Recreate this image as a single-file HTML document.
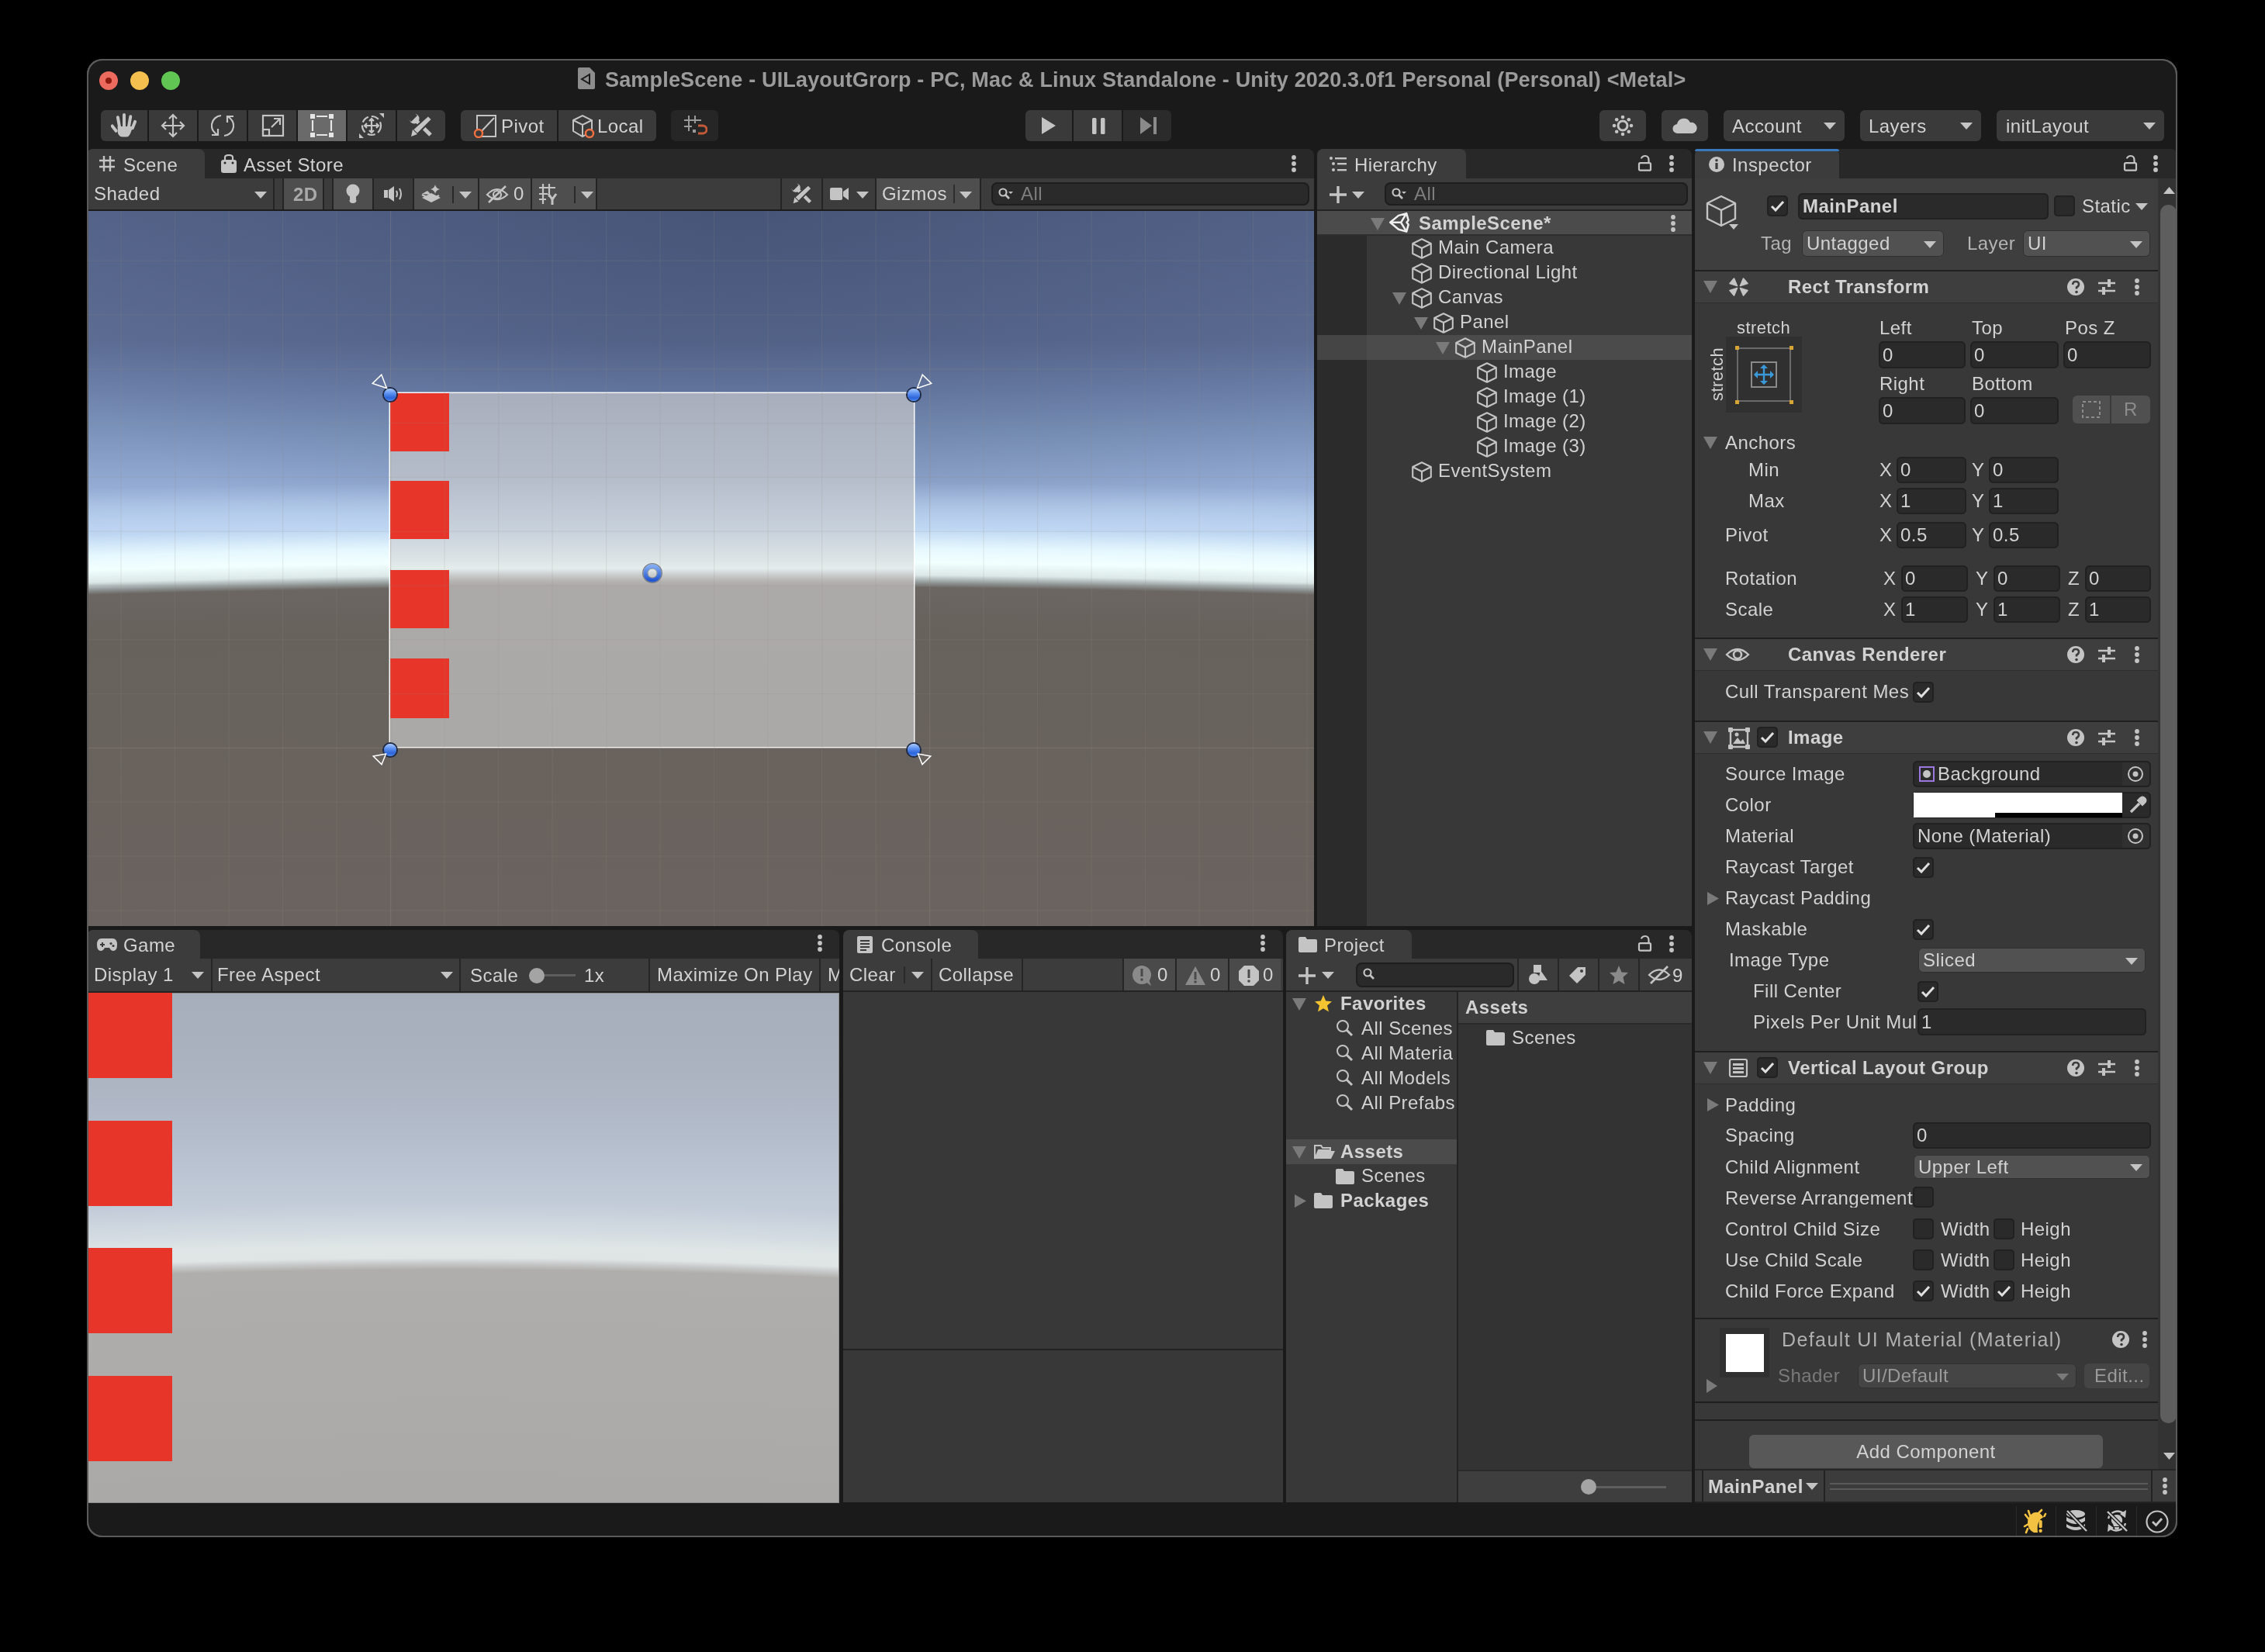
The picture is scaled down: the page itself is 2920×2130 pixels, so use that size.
<!DOCTYPE html><html><head><meta charset="utf-8"><style>
html,body{margin:0;padding:0;}
body{width:2920px;height:2130px;background:#000;position:relative;overflow:hidden;font-family:"Liberation Sans",sans-serif;}
#root{position:absolute;left:0;top:0;width:2920px;height:2130px;overflow:hidden;will-change:transform;}
#root>div,#root>svg{position:absolute;}
.t{white-space:nowrap;letter-spacing:0.45px;}
</style></head><body><div id="root">
<div style="left:112px;top:76px;width:2695px;height:1906px;background:#1a1a1a;border-radius:20px;box-shadow:inset 0 0 0 2px #5a5a5a;"></div>
<div style="left:128px;top:92px;width:24px;height:24px;background:#ec6a5e;border-radius:50%;"></div>
<div style="left:168px;top:92px;width:24px;height:24px;background:#f4bf4f;border-radius:50%;"></div>
<div style="left:208px;top:92px;width:24px;height:24px;background:#61c554;border-radius:50%;"></div>
<div style="left:136px;top:100px;width:8px;height:8px;background:#8e1b10;border-radius:50%;"></div>
<svg style="left:745px;top:87px;" width="22" height="28" viewBox="0 0 22 28"><path d="M0 2Q0 0 2 0H15L22 7V26Q22 28 20 28H2Q0 28 0 26Z" fill="#8d8d8d"/><path d="M5 15L15 9V21Z" fill="none" stroke="#1a1a1a" stroke-width="2"/></svg>
<div style="left:780px;top:89.8px;font-size:27px;line-height:27px;color:#9b9b9b;font-weight:bold;letter-spacing:0.17px;" class="t">SampleScene - UILayoutGrorp - PC, Mac &amp; Linux Standalone - Unity 2020.3.0f1 Personal (Personal) &lt;Metal&gt;</div>
<div style="left:130px;top:142px;width:60px;height:40px;background:#3a3a3a;border-radius:6px 0px 0px 6px;"></div>
<div style="left:192px;top:142px;width:62px;height:40px;background:#3a3a3a;border-radius:0px 0px 0px 0px;"></div>
<div style="left:256px;top:142px;width:62px;height:40px;background:#3a3a3a;border-radius:0px 0px 0px 0px;"></div>
<div style="left:320px;top:142px;width:62px;height:40px;background:#3a3a3a;border-radius:0px 0px 0px 0px;"></div>
<div style="left:384px;top:142px;width:62px;height:40px;background:#6a6a6a;border-radius:0px 0px 0px 0px;"></div>
<div style="left:448px;top:142px;width:62px;height:40px;background:#3a3a3a;border-radius:0px 0px 0px 0px;"></div>
<div style="left:512px;top:142px;width:62px;height:40px;background:#3a3a3a;border-radius:0px 6px 6px 0px;"></div>
<div style="left:594px;top:142px;width:124px;height:40px;background:#3a3a3a;border-radius:6px 0px 0px 6px;"></div>
<div style="left:720px;top:142px;width:126px;height:40px;background:#3a3a3a;border-radius:0px 6px 6px 0px;"></div>
<div style="left:865px;top:142px;width:61px;height:40px;background:#262626;border-radius:6px 6px 6px 6px;"></div>
<div style="left:1322px;top:142px;width:60px;height:40px;background:#3a3a3a;border-radius:6px 0px 0px 6px;"></div>
<div style="left:1384px;top:142px;width:62px;height:40px;background:#3a3a3a;border-radius:0px 0px 0px 0px;"></div>
<div style="left:1448px;top:142px;width:62px;height:40px;background:#2b2b2b;border-radius:0px 6px 6px 0px;"></div>
<div style="left:2062px;top:142px;width:60px;height:40px;background:#3a3a3a;border-radius:6px 6px 6px 6px;"></div>
<div style="left:2142px;top:142px;width:60px;height:40px;background:#3a3a3a;border-radius:6px 6px 6px 6px;"></div>
<div style="left:2222px;top:142px;width:156px;height:40px;background:#3a3a3a;border-radius:6px 6px 6px 6px;"></div>
<div style="left:2398px;top:142px;width:156px;height:40px;background:#3a3a3a;border-radius:6px 6px 6px 6px;"></div>
<div style="left:2574px;top:142px;width:216px;height:40px;background:#3a3a3a;border-radius:6px 6px 6px 6px;"></div>
<svg style="left:143px;top:146px;" width="34" height="31" viewBox="0 0 34 31"><g transform="translate(3 0)" fill="#c4c4c4"><rect x="6.5" y="3" width="4" height="17" rx="2" transform="rotate(-10 8.5 20)"/><rect x="12" y="0" width="4" height="19" rx="2"/><rect x="17.5" y="2" width="4" height="18" rx="2" transform="rotate(10 19.5 20)"/><rect x="22" y="8" width="4" height="13" rx="2" transform="rotate(22 24 21)"/><rect x="1" y="13" width="4" height="12" rx="2" transform="rotate(-38 3 22)"/><path d="M5.5 17H25.5L22.5 25Q20.5 30.5 17 30.5H12Q8 30.5 6 26Z"/></g></svg>
<svg style="left:207px;top:146px;" width="32" height="32" viewBox="0 0 32 32"><g stroke="#c4c4c4" stroke-width="2.2" fill="none"><path d="M16 2V30M2 16H30M11 7L16 2L21 7M11 25L16 30L21 25M7 11L2 16L7 21M25 11L30 16L25 21"/></g></svg>
<svg style="left:272px;top:147px;" width="30" height="30" viewBox="0 0 30 30"><g stroke="#c4c4c4" stroke-width="2.2" fill="none"><path d="M13 2A13 13 0 0 0 9 27M17 28A13 13 0 0 0 21 3"/><path d="M9 19V27H1M21 11V3H29"/></g></svg>
<svg style="left:337px;top:147px;" width="30" height="30" viewBox="0 0 30 30"><g stroke="#c4c4c4" stroke-width="2.2" fill="none"><rect x="2" y="2" width="26" height="26"/><rect x="2" y="20" width="8" height="8"/><path d="M13 17L24 6M16 6H24V14"/></g></svg>
<svg style="left:400px;top:147px;" width="30" height="30" viewBox="0 0 30 30"><g fill="#e6e6e6"><rect x="0" y="0" width="6" height="6"/><rect x="24" y="0" width="6" height="6"/><rect x="0" y="24" width="6" height="6"/><rect x="24" y="24" width="6" height="6"/></g><path d="M8 3H22M8 27H22M3 8V22M27 8V22" stroke="#e6e6e6" stroke-width="2.2"/></svg>
<svg style="left:463px;top:146px;" width="32" height="32" viewBox="0 0 32 32"><g stroke="#c4c4c4" stroke-width="2.2" fill="none"><circle cx="16" cy="16" r="12" stroke-dasharray="10 4"/><path d="M16 7V25M7 16H25M13 10L16 7L19 10M13 22L16 25L19 22M10 13L7 16L10 19M22 13L25 16L22 19"/></g><path d="M0 32L0 26L6 32Z M32 0L32 6L26 0Z" fill="#c4c4c4"/></svg>
<svg style="left:527px;top:146px;" width="32" height="32" viewBox="0 0 32 32"><path d="M9 9L28 28" stroke="#c4c4c4" stroke-width="5"/><circle cx="7" cy="7" r="6.5" fill="#c4c4c4"/><path d="M0 0L7 7L3 11L-3 5Z M0 0L7 7L11 3L5 -3Z" fill="#3a3a3a"/><path d="M25 3L30 8L11 27L5 21Z" fill="#c4c4c4" stroke="#3a3a3a" stroke-width="2"/><path d="M5 21L11 27L3 30Z" fill="#c4c4c4"/></svg>
<svg style="left:610px;top:148px;" width="30" height="30" viewBox="0 0 30 30"><rect x="5" y="1" width="24" height="27" fill="none" stroke="#c4c4c4" stroke-width="2"/><path d="M10 22L27 4" stroke="#c4c4c4" stroke-width="2"/><circle cx="7" cy="24" r="5" fill="#3a3a3a" stroke="#f07040" stroke-width="2.4"/></svg>
<div style="left:646px;top:151.3px;font-size:24px;line-height:24px;color:#d2d2d2;" class="t">Pivot</div>
<svg style="left:736px;top:147px;" width="32" height="32" viewBox="0 0 32 32"><path d="M3 8L15 2L27 8V22L15 29L3 22Z M3 8L15 14L27 8M15 14V29" fill="none" stroke="#c4c4c4" stroke-width="2"/><circle cx="24" cy="25" r="5" fill="#3a3a3a" stroke="#f07040" stroke-width="2.4"/></svg>
<div style="left:770px;top:151.3px;font-size:24px;line-height:24px;color:#d2d2d2;" class="t">Local</div>
<svg style="left:880px;top:147px;" width="32" height="32" viewBox="0 0 32 32"><g stroke="#9a9a9a" stroke-width="2"><path d="M8 2V22M16 2V12M2 8H24M2 16H12"/></g><rect x="13" y="20" width="4" height="4" fill="#9a9a9a"/><path d="M20 15H26A5 5 0 0 1 26 25H20" fill="none" stroke="#c25a3a" stroke-width="3"/></svg>
<svg style="left:1343px;top:151px;" width="18" height="22" viewBox="0 0 18 22"><path d="M0 0V22L18 11Z" fill="#c4c4c4"/></svg>
<svg style="left:1408px;top:152px;" width="17" height="21" viewBox="0 0 17 21"><rect x="0" y="0" width="5.5" height="21" rx="1.5" fill="#c4c4c4"/><rect x="11" y="0" width="5.5" height="21" rx="1.5" fill="#c4c4c4"/></svg>
<svg style="left:1470px;top:151px;" width="22" height="22" viewBox="0 0 22 22"><path d="M0 0V22L15 11Z" fill="#8a8a8a"/><rect x="17" y="0" width="4" height="22" fill="#8a8a8a"/></svg>
<svg style="left:2076px;top:146px;" width="32" height="32" viewBox="0 0 32 32"><circle cx="16" cy="16" r="6" fill="none" stroke="#c4c4c4" stroke-width="3"/><circle cx="27.0" cy="16.0" r="2.3" fill="#c4c4c4"/><circle cx="23.8" cy="23.8" r="2.3" fill="#c4c4c4"/><circle cx="16.0" cy="27.0" r="2.3" fill="#c4c4c4"/><circle cx="8.2" cy="23.8" r="2.3" fill="#c4c4c4"/><circle cx="5.0" cy="16.0" r="2.3" fill="#c4c4c4"/><circle cx="8.2" cy="8.2" r="2.3" fill="#c4c4c4"/><circle cx="16.0" cy="5.0" r="2.3" fill="#c4c4c4"/><circle cx="23.8" cy="8.2" r="2.3" fill="#c4c4c4"/></svg>
<svg style="left:2156px;top:151px;" width="32" height="22" viewBox="0 0 32 22"><path d="M7 21A6 6 0 0 1 6 9A9 9 0 0 1 23 7A7 7 0 0 1 26 21Z" fill="#c4c4c4"/></svg>
<div style="left:2233px;top:151.3px;font-size:24px;line-height:24px;color:#d2d2d2;" class="t">Account</div>
<svg style="left:2351.0px;top:157.5px;" width="16" height="9" viewBox="0 0 16 9"><path d="M0 0H16L8.0 9Z" fill="#c4c4c4"/></svg>
<div style="left:2409px;top:151.3px;font-size:24px;line-height:24px;color:#d2d2d2;" class="t">Layers</div>
<svg style="left:2527.0px;top:157.5px;" width="16" height="9" viewBox="0 0 16 9"><path d="M0 0H16L8.0 9Z" fill="#c4c4c4"/></svg>
<div style="left:2586px;top:151.3px;font-size:24px;line-height:24px;color:#d2d2d2;" class="t">initLayout</div>
<svg style="left:2763.0px;top:157.5px;" width="16" height="9" viewBox="0 0 16 9"><path d="M0 0H16L8.0 9Z" fill="#c4c4c4"/></svg>
<div style="left:112px;top:192px;width:1582px;height:38px;background:#282828;border-radius:8px 8px 0 0;"></div>
<div style="left:112px;top:192px;width:152px;height:38px;background:#3c3c3c;border-radius:8px 8px 0 0;"></div>
<svg style="left:127px;top:200px;" width="22" height="22" viewBox="0 0 22 22"><g stroke="#c4c4c4" stroke-width="2.4"><path d="M7 1V21M15 1V21M1 7H21M1 15H21"/></g></svg>
<div style="left:159px;top:201.3px;font-size:24px;line-height:24px;color:#d2d2d2;" class="t">Scene</div>
<svg style="left:284px;top:199px;" width="22" height="24" viewBox="0 0 22 24"><path d="M6 8V4Q6 1 11 1Q16 1 16 4V8" fill="none" stroke="#c4c4c4" stroke-width="2.2"/><rect x="1" y="7" width="20" height="17" rx="3" fill="#c4c4c4"/><circle cx="6" cy="11" r="1.5" fill="#282828"/><circle cx="16" cy="11" r="1.5" fill="#282828"/></svg>
<div style="left:314px;top:201.3px;font-size:24px;line-height:24px;color:#d2d2d2;" class="t">Asset Store</div>
<svg style="left:1663px;top:198px;" width="10" height="26" viewBox="0 0 10 26"><circle cx="5" cy="5" r="2.9" fill="#c4c4c4"/><circle cx="5" cy="13" r="2.9" fill="#c4c4c4"/><circle cx="5" cy="21" r="2.9" fill="#c4c4c4"/></svg>
<div style="left:112px;top:230px;width:1582px;height:40px;background:#3c3c3c;"></div>
<div style="left:112px;top:270px;width:1582px;height:2px;background:#1c1c1c;"></div>
<div style="left:121px;top:238.3px;font-size:24px;line-height:24px;color:#d2d2d2;" class="t">Shaded</div>
<svg style="left:328.0px;top:246.5px;" width="16" height="9" viewBox="0 0 16 9"><path d="M0 0H16L8.0 9Z" fill="#c4c4c4"/></svg>
<div style="left:352px;top:230px;width:2px;height:40px;background:#242424;"></div>
<div style="left:364px;top:230px;width:2px;height:40px;background:#242424;"></div>
<div style="left:416px;top:230px;width:2px;height:40px;background:#242424;"></div>
<div style="left:428px;top:230px;width:2px;height:40px;background:#242424;"></div>
<div style="left:480px;top:230px;width:2px;height:40px;background:#242424;"></div>
<div style="left:532px;top:230px;width:2px;height:40px;background:#242424;"></div>
<div style="left:616px;top:230px;width:2px;height:40px;background:#242424;"></div>
<div style="left:684px;top:230px;width:2px;height:40px;background:#242424;"></div>
<div style="left:768px;top:230px;width:2px;height:40px;background:#242424;"></div>
<div style="left:366px;top:230px;width:50px;height:40px;background:#4e4e4e;"></div>
<div style="left:430px;top:230px;width:50px;height:40px;background:#4e4e4e;"></div>
<div style="left:482px;top:230px;width:50px;height:40px;background:#3a3a3a;"></div>
<div style="left:534px;top:230px;width:82px;height:40px;background:#4e4e4e;"></div>
<div style="left:618px;top:230px;width:66px;height:40px;background:#4e4e4e;"></div>
<div style="left:686px;top:230px;width:82px;height:40px;background:#4e4e4e;"></div>
<div style="left:378px;top:239.3px;font-size:24px;line-height:24px;color:#a9a9a9;font-weight:bold;" class="t">2D</div>
<svg style="left:445px;top:237px;" width="20" height="26" viewBox="0 0 20 26"><circle cx="10" cy="9" r="8.5" fill="#c4c4c4"/><rect x="6" y="15" width="8" height="6" fill="#c4c4c4"/><path d="M5.5 21H14.5Q14.5 25 10 25Q5.5 25 5.5 21Z" fill="#c4c4c4"/></svg>
<svg style="left:494px;top:239px;" width="26" height="22" viewBox="0 0 26 22"><rect x="1" y="6" width="5" height="10" fill="#c4c4c4"/><path d="M7 6L14 1V21L7 16Z" fill="#c4c4c4"/><path d="M17 7Q19 11 17 15M21 4Q25 11 21 18" fill="none" stroke="#c4c4c4" stroke-width="2"/></svg>
<svg style="left:543px;top:237px;" width="26" height="26" viewBox="0 0 26 26"><path d="M1 18L13 12L25 18L13 24Z" fill="#c4c4c4"/><path d="M1 13L8 9L13 14L1 13Z" fill="#c4c4c4"/><path d="M1 14L13 20L23 15" fill="none" stroke="#c4c4c4" stroke-width="2.4"/><path d="M18 1Q19 6 24 7Q19 8 18 13Q17 8 12 7Q17 6 18 1Z" fill="#c4c4c4"/></svg>
<div style="left:583px;top:240px;width:2px;height:22px;background:#2a2a2a;"></div>
<svg style="left:592.0px;top:246.5px;" width="16" height="9" viewBox="0 0 16 9"><path d="M0 0H16L8.0 9Z" fill="#c4c4c4"/></svg>
<svg style="left:626px;top:238px;" width="30" height="24" viewBox="0 0 30 24"><path d="M2 13Q15 -1 28 13Q15 25 2 13Z" fill="none" stroke="#c4c4c4" stroke-width="2.2"/><circle cx="15" cy="13" r="5" fill="none" stroke="#c4c4c4" stroke-width="2.2"/><path d="M4 23L26 2" stroke="#c4c4c4" stroke-width="2.6"/></svg>
<div style="left:662px;top:238.3px;font-size:24px;line-height:24px;color:#d2d2d2;" class="t">0</div>
<svg style="left:694px;top:236px;" width="30" height="28" viewBox="0 0 30 28"><g stroke="#c4c4c4" stroke-width="2.2"><path d="M6 1V27M14 1V18M1 6H22M1 14H12M1 21H10"/></g><path d="M13 14L18 21L23 14M18 21V28" fill="none" stroke="#c4c4c4" stroke-width="3"/></svg>
<div style="left:740px;top:240px;width:2px;height:22px;background:#2a2a2a;"></div>
<svg style="left:749.0px;top:246.5px;" width="16" height="9" viewBox="0 0 16 9"><path d="M0 0H16L8.0 9Z" fill="#c4c4c4"/></svg>
<div style="left:1006px;top:230px;width:2px;height:40px;background:#242424;"></div>
<div style="left:1059px;top:230px;width:2px;height:40px;background:#242424;"></div>
<div style="left:1128px;top:230px;width:2px;height:40px;background:#242424;"></div>
<div style="left:1263px;top:230px;width:2px;height:40px;background:#242424;"></div>
<div style="left:1130px;top:230px;width:133px;height:40px;background:#4e4e4e;"></div>
<svg style="left:1020px;top:236px;" width="28" height="28" viewBox="0 0 28 28"><g transform="scale(0.875)"><path d="M9 9L28 28" stroke="#c4c4c4" stroke-width="5"/><circle cx="7" cy="7" r="6.5" fill="#c4c4c4"/><path d="M0 0L7 7L3 11L-3 5Z M0 0L7 7L11 3L5 -3Z" fill="#3c3c3c"/><path d="M25 3L30 8L11 27L5 21Z" fill="#c4c4c4" stroke="#3c3c3c" stroke-width="2"/><path d="M5 21L11 27L3 30Z" fill="#c4c4c4"/></g></svg>
<svg style="left:1070px;top:240px;" width="26" height="20" viewBox="0 0 26 20"><rect x="0" y="2" width="16" height="16" rx="2" fill="#c4c4c4"/><path d="M17 7L24 2V18L17 13Z" fill="#c4c4c4"/></svg>
<svg style="left:1104.0px;top:246.5px;" width="16" height="9" viewBox="0 0 16 9"><path d="M0 0H16L8.0 9Z" fill="#c4c4c4"/></svg>
<div style="left:1137px;top:238.3px;font-size:24px;line-height:24px;color:#d2d2d2;" class="t">Gizmos</div>
<div style="left:1229px;top:238px;width:2px;height:24px;background:#2e2e2e;"></div>
<svg style="left:1237.0px;top:246.5px;" width="16" height="9" viewBox="0 0 16 9"><path d="M0 0H16L8.0 9Z" fill="#c4c4c4"/></svg>
<div style="left:1278px;top:235px;width:410px;height:30px;background:#2a2a2a;border-radius:8px;box-shadow:inset 0 0 0 2px #1e1e1e;"></div>
<svg style="left:1287px;top:242px;" width="20" height="18" viewBox="0 0 20 18"><circle cx="6" cy="6" r="4.5" fill="none" stroke="#c4c4c4" stroke-width="2.2"/><path d="M9 9L14 14" stroke="#c4c4c4" stroke-width="2.6"/><path d="M13 5H19L16 8Z" fill="#c4c4c4"/></svg>
<div style="left:1316px;top:238.3px;font-size:24px;line-height:24px;color:#7d7d7d;" class="t">All</div>
<div style="left:112px;top:272px;width:1582px;height:922px;background:radial-gradient(7531px 2000px at 788px 2478px,#6a635f 77.8%,#68625d 96.9%,#6b6662 99.7%,#8e9494 100%,#dce8e8 100.5%,#f2ffff 101.3%,#e6f8fe 102.2%,#bed6f2 103.55%,rgba(151,174,214,0) 106.5%),radial-gradient(ellipse 950px 520px at 838px 0px,rgba(35,45,75,0.28),rgba(35,45,75,0) 100%),linear-gradient(to bottom,#55648a 0px,#5d6d94 167px,#6c80aa 230px,#7a92ba 279px,#97aed6 363px,#a8c0e2 400px,#b5cef0 430px,#b5cef0 922px);overflow:hidden;"></div>
<div style="left:503px;top:507px;width:675px;height:456px;background:linear-gradient(to bottom,#a8aebc 0px,#b4bcca 107px,#c8d2dc 178px,#dde4e6 215px,#e4ecec 226px,#c8caca 235px,#b4b2b0 243px,#acaaa8 249px,#aaa9a7 456px);box-shadow:0 0 0 1.5px rgba(255,255,255,0.95);"></div>
<div style="left:503px;top:507px;width:76px;height:75px;background:#e8352a;"></div>
<div style="left:503px;top:620px;width:76px;height:75px;background:#e8352a;"></div>
<div style="left:503px;top:735px;width:76px;height:75px;background:#e8352a;"></div>
<div style="left:503px;top:849px;width:76px;height:77px;background:#e8352a;"></div>
<svg style="left:112px;top:272px;" width="1582" height="922" viewBox="0 0 1582 922"><rect x="43.5" y="0" width="1.2" height="922" fill="rgba(150,140,130,0.16)"/><rect x="113.0" y="0" width="1.2" height="922" fill="rgba(150,140,130,0.16)"/><rect x="182.5" y="0" width="1.2" height="922" fill="rgba(150,140,130,0.16)"/><rect x="252.0" y="0" width="1.2" height="922" fill="rgba(150,140,130,0.16)"/><rect x="321.5" y="0" width="1.2" height="922" fill="rgba(150,140,130,0.16)"/><rect x="391.0" y="0" width="1.2" height="922" fill="rgba(150,140,130,0.3)"/><rect x="460.5" y="0" width="1.2" height="922" fill="rgba(150,140,130,0.16)"/><rect x="530.0" y="0" width="1.2" height="922" fill="rgba(150,140,130,0.16)"/><rect x="599.5" y="0" width="1.2" height="922" fill="rgba(150,140,130,0.16)"/><rect x="669.0" y="0" width="1.2" height="922" fill="rgba(150,140,130,0.16)"/><rect x="738.5" y="0" width="1.2" height="922" fill="rgba(150,140,130,0.16)"/><rect x="808.0" y="0" width="1.2" height="922" fill="rgba(150,140,130,0.16)"/><rect x="877.5" y="0" width="1.2" height="922" fill="rgba(150,140,130,0.16)"/><rect x="947.0" y="0" width="1.2" height="922" fill="rgba(150,140,130,0.16)"/><rect x="1016.5" y="0" width="1.2" height="922" fill="rgba(150,140,130,0.16)"/><rect x="1086.0" y="0" width="1.2" height="922" fill="rgba(150,140,130,0.3)"/><rect x="1155.5" y="0" width="1.2" height="922" fill="rgba(150,140,130,0.16)"/><rect x="1225.0" y="0" width="1.2" height="922" fill="rgba(150,140,130,0.16)"/><rect x="1294.5" y="0" width="1.2" height="922" fill="rgba(150,140,130,0.16)"/><rect x="1364.0" y="0" width="1.2" height="922" fill="rgba(150,140,130,0.16)"/><rect x="1433.5" y="0" width="1.2" height="922" fill="rgba(150,140,130,0.16)"/><rect x="1503.0" y="0" width="1.2" height="922" fill="rgba(150,140,130,0.16)"/><rect x="1572.5" y="0" width="1.2" height="922" fill="rgba(150,140,130,0.16)"/><rect x="0" y="63.6" width="1582" height="1.2" fill="rgba(150,140,130,0.16)"/><rect x="0" y="133.4" width="1582" height="1.2" fill="rgba(150,140,130,0.16)"/><rect x="0" y="203.2" width="1582" height="1.2" fill="rgba(150,140,130,0.16)"/><rect x="0" y="273.0" width="1582" height="1.2" fill="rgba(150,140,130,0.16)"/><rect x="0" y="342.8" width="1582" height="1.2" fill="rgba(150,140,130,0.16)"/><rect x="0" y="412.6" width="1582" height="1.2" fill="rgba(150,140,130,0.16)"/><rect x="0" y="482.4" width="1582" height="1.2" fill="rgba(150,140,130,0.16)"/><rect x="0" y="552.2" width="1582" height="1.2" fill="rgba(150,140,130,0.16)"/><rect x="0" y="622.0" width="1582" height="1.2" fill="rgba(150,140,130,0.16)"/><rect x="0" y="691.8" width="1582" height="1.2" fill="rgba(150,140,130,0.3)"/><rect x="0" y="761.6" width="1582" height="1.2" fill="rgba(150,140,130,0.16)"/><rect x="0" y="831.4" width="1582" height="1.2" fill="rgba(150,140,130,0.16)"/><rect x="0" y="901.2" width="1582" height="1.2" fill="rgba(150,140,130,0.16)"/></svg>
<div style="left:495px;top:501px;width:16px;height:16px;background:linear-gradient(to bottom,#a8c8ff,#5a90f0 40%,#2d64d8 75%,#4a86f0);border-radius:50%;box-shadow:0 0 0 2px #1e2a44;"></div>
<div style="left:1170px;top:501px;width:16px;height:16px;background:linear-gradient(to bottom,#a8c8ff,#5a90f0 40%,#2d64d8 75%,#4a86f0);border-radius:50%;box-shadow:0 0 0 2px #1e2a44;"></div>
<div style="left:495px;top:959px;width:16px;height:16px;background:linear-gradient(to bottom,#a8c8ff,#5a90f0 40%,#2d64d8 75%,#4a86f0);border-radius:50%;box-shadow:0 0 0 2px #1e2a44;"></div>
<div style="left:1170px;top:959px;width:16px;height:16px;background:linear-gradient(to bottom,#a8c8ff,#5a90f0 40%,#2d64d8 75%,#4a86f0);border-radius:50%;box-shadow:0 0 0 2px #1e2a44;"></div>
<svg style="left:470px;top:470px;" width="741" height="540" viewBox="0 0 741 540"><path d="M10.3 24.4 L21.8 13.2 L28.5 30.5Z" fill="none" stroke="#fff" stroke-width="1.5"/><path d="M730.7 24.4 L719.2 13.2 L712.5 30.5Z" fill="none" stroke="#fff" stroke-width="1.5"/><path d="M11.2 505.0 L22.0 515.6 L27.5 502.0Z" fill="none" stroke="#fff" stroke-width="1.5"/><path d="M729.8 505.0 L719.0 515.6 L713.5 502.0Z" fill="none" stroke="#fff" stroke-width="1.5"/></svg>
<svg style="left:826px;top:725px;" width="30" height="30" viewBox="0 0 30 30"><defs><linearGradient id="pg" x1="0" y1="0" x2="0" y2="1"><stop offset="0" stop-color="#80aaf2"/><stop offset="1" stop-color="#2458d0"/></linearGradient></defs><circle cx="15" cy="14" r="9" fill="none" stroke="url(#pg)" stroke-width="5.5"/><circle cx="15" cy="14" r="12.3" fill="none" stroke="#7a7e86" stroke-width="1.3"/><circle cx="15" cy="14" r="6" fill="none" stroke="#8a9098" stroke-width="1"/></svg>
<div style="left:1698px;top:192px;width:483px;height:38px;background:#282828;border-radius:8px 8px 0 0;"></div>
<div style="left:1698px;top:192px;width:192px;height:38px;background:#3c3c3c;border-radius:8px 8px 0 0;"></div>
<svg style="left:1714px;top:202px;" width="22" height="20" viewBox="0 0 22 20"><g fill="#c4c4c4"><circle cx="2" cy="2" r="2"/><circle cx="5" cy="9" r="2"/><circle cx="5" cy="17" r="2"/><rect x="7" y="1" width="15" height="2.4"/><rect x="10" y="8" width="12" height="2.4"/><rect x="10" y="16" width="12" height="2.4"/></g></svg>
<div style="left:1746px;top:201.3px;font-size:24px;line-height:24px;color:#d2d2d2;" class="t">Hierarchy</div>
<svg style="left:2111px;top:199px;" width="20" height="22" viewBox="0 0 20 22"><path d="M14.5 11V7.5Q14.5 2 9.8 2Q6.8 2 5.2 4.5" fill="none" stroke="#c4c4c4" stroke-width="2.2" stroke-linecap="round"/><rect x="2" y="11.2" width="15" height="9.5" rx="1.5" fill="none" stroke="#c4c4c4" stroke-width="2.2"/></svg>
<svg style="left:2150px;top:198px;" width="10" height="26" viewBox="0 0 10 26"><circle cx="5" cy="5" r="2.9" fill="#c4c4c4"/><circle cx="5" cy="13" r="2.9" fill="#c4c4c4"/><circle cx="5" cy="21" r="2.9" fill="#c4c4c4"/></svg>
<div style="left:1698px;top:230px;width:483px;height:40px;background:#3c3c3c;"></div>
<div style="left:1698px;top:270px;width:483px;height:2px;background:#232323;"></div>
<svg style="left:1712px;top:238px;" width="26" height="26" viewBox="0 0 26 26"><path d="M13 2V24M2 13H24" stroke="#c4c4c4" stroke-width="3.4"/></svg>
<svg style="left:1743.0px;top:246.5px;" width="16" height="9" viewBox="0 0 16 9"><path d="M0 0H16L8.0 9Z" fill="#c4c4c4"/></svg>
<div style="left:1785px;top:235px;width:391px;height:30px;background:#2a2a2a;border-radius:8px;box-shadow:inset 0 0 0 2px #1e1e1e;"></div>
<svg style="left:1794px;top:242px;" width="20" height="18" viewBox="0 0 20 18"><circle cx="6" cy="6" r="4.5" fill="none" stroke="#c4c4c4" stroke-width="2.2"/><path d="M9 9L14 14" stroke="#c4c4c4" stroke-width="2.6"/><path d="M13 5H19L16 8Z" fill="#c4c4c4"/></svg>
<div style="left:1823px;top:238.3px;font-size:24px;line-height:24px;color:#7d7d7d;" class="t">All</div>
<div style="left:1698px;top:272px;width:483px;height:922px;background:#383838;"></div>
<div style="left:1698px;top:304px;width:64px;height:890px;background:#2b2b2b;"></div>
<div style="left:1698px;top:272px;width:483px;height:30px;background:#4b4b4b;"></div>
<div style="left:1698px;top:302px;width:483px;height:2px;background:#2e2e2e;"></div>
<div style="left:1698px;top:432px;width:483px;height:32px;background:#4b4b4b;"></div>
<div style="left:1698px;top:432px;width:64px;height:32px;background:#454545;"></div>
<svg style="left:1767.0px;top:281.0px;" width="18" height="16" viewBox="0 0 18 16"><path d="M0 0H18L9.0 16Z" fill="#7a7a7a"/></svg>
<svg style="left:1790px;top:273px;" width="28" height="28" viewBox="0 0 28 28"><path d="M2.2 13.8L13 4.9L23.2 2.1L25.7 11L23.5 13.8L25.7 16.6L23.2 25.6L13 22.7Z M2.2 13.8H16.1M16.1 13.8L23.2 2.1M16.1 13.8L23.2 25.6" fill="none" stroke="#eeeeee" stroke-width="2.5" stroke-linejoin="round"/></svg>
<div style="left:1829px;top:276.3px;font-size:24px;line-height:24px;color:#d2d2d2;font-weight:bold;" class="t">SampleScene*</div>
<svg style="left:2152px;top:275px;" width="10" height="26" viewBox="0 0 10 26"><circle cx="5" cy="5" r="2.9" fill="#c4c4c4"/><circle cx="5" cy="13" r="2.9" fill="#c4c4c4"/><circle cx="5" cy="21" r="2.9" fill="#c4c4c4"/></svg>
<svg style="left:1820px;top:307px;" width="26" height="27" viewBox="0 0 26 27"><path d="M13 1.2L24.8 7V20L13 25.8L1.2 20V7Z M1.2 7L13 13L24.8 7M13 13V25.8" fill="none" stroke="#c4c4c4" stroke-width="2.1" stroke-linejoin="round"/></svg>
<div style="left:1854px;top:306.8px;font-size:24px;line-height:24px;color:#d2d2d2;" class="t">Main Camera</div>
<svg style="left:1820px;top:339px;" width="26" height="27" viewBox="0 0 26 27"><path d="M13 1.2L24.8 7V20L13 25.8L1.2 20V7Z M1.2 7L13 13L24.8 7M13 13V25.8" fill="none" stroke="#c4c4c4" stroke-width="2.1" stroke-linejoin="round"/></svg>
<div style="left:1854px;top:338.8px;font-size:24px;line-height:24px;color:#d2d2d2;" class="t">Directional Light</div>
<svg style="left:1795.0px;top:377.0px;" width="18" height="16" viewBox="0 0 18 16"><path d="M0 0H18L9.0 16Z" fill="#7a7a7a"/></svg>
<svg style="left:1820px;top:371px;" width="26" height="27" viewBox="0 0 26 27"><path d="M13 1.2L24.8 7V20L13 25.8L1.2 20V7Z M1.2 7L13 13L24.8 7M13 13V25.8" fill="none" stroke="#c4c4c4" stroke-width="2.1" stroke-linejoin="round"/></svg>
<div style="left:1854px;top:370.8px;font-size:24px;line-height:24px;color:#d2d2d2;" class="t">Canvas</div>
<svg style="left:1823.0px;top:409.0px;" width="18" height="16" viewBox="0 0 18 16"><path d="M0 0H18L9.0 16Z" fill="#7a7a7a"/></svg>
<svg style="left:1848px;top:403px;" width="26" height="27" viewBox="0 0 26 27"><path d="M13 1.2L24.8 7V20L13 25.8L1.2 20V7Z M1.2 7L13 13L24.8 7M13 13V25.8" fill="none" stroke="#c4c4c4" stroke-width="2.1" stroke-linejoin="round"/></svg>
<div style="left:1882px;top:402.8px;font-size:24px;line-height:24px;color:#d2d2d2;" class="t">Panel</div>
<svg style="left:1851.0px;top:441.0px;" width="18" height="16" viewBox="0 0 18 16"><path d="M0 0H18L9.0 16Z" fill="#7a7a7a"/></svg>
<svg style="left:1876px;top:435px;" width="26" height="27" viewBox="0 0 26 27"><path d="M13 1.2L24.8 7V20L13 25.8L1.2 20V7Z M1.2 7L13 13L24.8 7M13 13V25.8" fill="none" stroke="#c4c4c4" stroke-width="2.1" stroke-linejoin="round"/></svg>
<div style="left:1910px;top:434.8px;font-size:24px;line-height:24px;color:#d2d2d2;" class="t">MainPanel</div>
<svg style="left:1904px;top:467px;" width="26" height="27" viewBox="0 0 26 27"><path d="M13 1.2L24.8 7V20L13 25.8L1.2 20V7Z M1.2 7L13 13L24.8 7M13 13V25.8" fill="none" stroke="#c4c4c4" stroke-width="2.1" stroke-linejoin="round"/></svg>
<div style="left:1938px;top:466.8px;font-size:24px;line-height:24px;color:#d2d2d2;" class="t">Image</div>
<svg style="left:1904px;top:499px;" width="26" height="27" viewBox="0 0 26 27"><path d="M13 1.2L24.8 7V20L13 25.8L1.2 20V7Z M1.2 7L13 13L24.8 7M13 13V25.8" fill="none" stroke="#c4c4c4" stroke-width="2.1" stroke-linejoin="round"/></svg>
<div style="left:1938px;top:498.8px;font-size:24px;line-height:24px;color:#d2d2d2;" class="t">Image (1)</div>
<svg style="left:1904px;top:531px;" width="26" height="27" viewBox="0 0 26 27"><path d="M13 1.2L24.8 7V20L13 25.8L1.2 20V7Z M1.2 7L13 13L24.8 7M13 13V25.8" fill="none" stroke="#c4c4c4" stroke-width="2.1" stroke-linejoin="round"/></svg>
<div style="left:1938px;top:530.8px;font-size:24px;line-height:24px;color:#d2d2d2;" class="t">Image (2)</div>
<svg style="left:1904px;top:563px;" width="26" height="27" viewBox="0 0 26 27"><path d="M13 1.2L24.8 7V20L13 25.8L1.2 20V7Z M1.2 7L13 13L24.8 7M13 13V25.8" fill="none" stroke="#c4c4c4" stroke-width="2.1" stroke-linejoin="round"/></svg>
<div style="left:1938px;top:562.8px;font-size:24px;line-height:24px;color:#d2d2d2;" class="t">Image (3)</div>
<svg style="left:1820px;top:595px;" width="26" height="27" viewBox="0 0 26 27"><path d="M13 1.2L24.8 7V20L13 25.8L1.2 20V7Z M1.2 7L13 13L24.8 7M13 13V25.8" fill="none" stroke="#c4c4c4" stroke-width="2.1" stroke-linejoin="round"/></svg>
<div style="left:1854px;top:594.8px;font-size:24px;line-height:24px;color:#d2d2d2;" class="t">EventSystem</div>
<div style="left:2185px;top:192px;width:622px;height:38px;background:#282828;border-radius:8px 8px 0 0;"></div>
<div style="left:2185px;top:192px;width:186px;height:38px;background:#3c3c3c;border-radius:8px 8px 0 0;"></div>
<div style="left:2185px;top:192px;width:186px;height:3px;background:#3a79bb;border-radius:8px 8px 0 0;"></div>
<svg style="left:2203px;top:202px;" width="20" height="20" viewBox="0 0 20 20"><circle cx="10" cy="10" r="10" fill="#c4c4c4"/><rect x="8.4" y="8" width="3.2" height="8" fill="#3c3c3c"/><circle cx="10" cy="4.8" r="1.8" fill="#3c3c3c"/></svg>
<div style="left:2233px;top:201.3px;font-size:24px;line-height:24px;color:#d2d2d2;" class="t">Inspector</div>
<svg style="left:2737px;top:199px;" width="20" height="22" viewBox="0 0 20 22"><path d="M14.5 11V7.5Q14.5 2 9.8 2Q6.8 2 5.2 4.5" fill="none" stroke="#c4c4c4" stroke-width="2.2" stroke-linecap="round"/><rect x="2" y="11.2" width="15" height="9.5" rx="1.5" fill="none" stroke="#c4c4c4" stroke-width="2.2"/></svg>
<svg style="left:2774px;top:198px;" width="10" height="26" viewBox="0 0 10 26"><circle cx="5" cy="5" r="2.9" fill="#c4c4c4"/><circle cx="5" cy="13" r="2.9" fill="#c4c4c4"/><circle cx="5" cy="21" r="2.9" fill="#c4c4c4"/></svg>
<div style="left:2185px;top:230px;width:597px;height:1666px;background:#383838;"></div>
<div style="left:2185px;top:230px;width:597px;height:118px;background:#3e3e3e;"></div>
<div style="left:2782px;top:230px;width:25px;height:1666px;background:#333333;"></div>
<div style="left:2785px;top:264px;width:21px;height:1571px;background:#5e5e5e;border-radius:10px;"></div>
<svg style="left:2789px;top:241px;" width="15" height="9" viewBox="0 0 15 9"><path d="M0 9H15L7.5 0Z" fill="#c4c4c4"/></svg>
<svg style="left:2789px;top:1873px;" width="15" height="9" viewBox="0 0 15 9"><path d="M0 0H15L7.5 9Z" fill="#c4c4c4"/></svg>
<svg style="left:2199px;top:251px;" width="42" height="46" viewBox="0 0 42 46"><path d="M20 2L38 11V31L20 40L2 31V11Z M2 11L20 20L38 11M20 20V40" fill="none" stroke="#c4c4c4" stroke-width="2.4" stroke-linejoin="round"/><path d="M30 38H42L36 45Z" fill="#c4c4c4"/></svg>
<div style="left:2278px;top:252px;width:27px;height:27px;background:#2a2a2a;border-radius:5px;box-shadow:inset 0 0 0 2px #212121;"></div>
<svg style="left:2282px;top:258px;" width="19" height="15" viewBox="0 0 19 15"><path d="M2 8L7 13L17 2" fill="none" stroke="#e0e0e0" stroke-width="3"/></svg>
<div style="left:2318px;top:249px;width:323px;height:34px;background:#2a2a2a;border-radius:6px;box-shadow:inset 0 0 0 2px #212121;"></div>
<div style="left:2324px;top:254.3px;font-size:24px;line-height:24px;color:#d2d2d2;font-weight:bold;" class="t">MainPanel</div>
<div style="left:2648px;top:252px;width:27px;height:27px;background:#2a2a2a;border-radius:5px;box-shadow:inset 0 0 0 2px #212121;"></div>
<div style="left:2684px;top:254.3px;font-size:24px;line-height:24px;color:#d2d2d2;" class="t">Static</div>
<svg style="left:2753.0px;top:261.5px;" width="16" height="9" viewBox="0 0 16 9"><path d="M0 0H16L8.0 9Z" fill="#c4c4c4"/></svg>
<div style="left:2270px;top:302.3px;font-size:24px;line-height:24px;color:#b4b4b4;" class="t">Tag</div>
<div style="left:2323px;top:297px;width:183px;height:34px;background:#515151;border-radius:6px;box-shadow:inset 0 0 0 1px #303030;"></div>
<div style="left:2329px;top:302.3px;font-size:24px;line-height:24px;color:#d2d2d2;" class="t">Untagged</div>
<svg style="left:2480.0px;top:310.5px;" width="16" height="9" viewBox="0 0 16 9"><path d="M0 0H16L8.0 9Z" fill="#c4c4c4"/></svg>
<div style="left:2536px;top:302.3px;font-size:24px;line-height:24px;color:#b4b4b4;" class="t">Layer</div>
<div style="left:2608px;top:297px;width:164px;height:34px;background:#515151;border-radius:6px;box-shadow:inset 0 0 0 1px #303030;"></div>
<div style="left:2614px;top:302.3px;font-size:24px;line-height:24px;color:#d2d2d2;" class="t">UI</div>
<svg style="left:2746.0px;top:310.5px;" width="16" height="9" viewBox="0 0 16 9"><path d="M0 0H16L8.0 9Z" fill="#c4c4c4"/></svg>
<div style="left:2185px;top:348px;width:597px;height:2px;background:#1f1f1f;"></div>
<div style="left:2185px;top:350px;width:597px;height:40px;background:#3e3e3e;"></div>
<div style="left:2185px;top:390px;width:597px;height:1px;background:#2e2e2e;"></div>
<svg style="left:2196.0px;top:362.0px;" width="18" height="16" viewBox="0 0 18 16"><path d="M0 0H18L9.0 16Z" fill="#7a7a7a"/></svg>
<svg style="left:2229px;top:358px;" width="25" height="24" viewBox="0 0 25 24"><path d="M1.0 7.5 L6.5 1.0 L10.5 10.5ZM24.0 7.5 L18.5 1.0 L14.5 10.5ZM1.0 16.5 L6.5 23.0 L10.5 13.5ZM24.0 16.5 L18.5 23.0 L14.5 13.5Z" fill="#c4c4c4" stroke="#c4c4c4" stroke-width="1.6" stroke-linejoin="round"/></svg>
<div style="left:2305px;top:358.3px;font-size:24px;line-height:24px;color:#d2d2d2;font-weight:bold;" class="t">Rect Transform</div>
<svg style="left:2664px;top:358px;" width="24" height="24" viewBox="0 0 24 24"><circle cx="12" cy="12" r="11" fill="#c4c4c4"/><path d="M8.2 9Q8.2 5 12 5Q16 5 16 8.5Q16 11 13 12.5V14.5" fill="none" stroke="#3e3e3e" stroke-width="2.6"/><circle cx="13" cy="18.5" r="1.8" fill="#3e3e3e"/></svg>
<svg style="left:2704px;top:358px;" width="24" height="24" viewBox="0 0 24 24"><g stroke="#c4c4c4" stroke-width="2.4"><path d="M1 7H23M1 17H23"/></g><rect x="13" y="2" width="4" height="10" fill="#c4c4c4"/><rect x="6" y="12" width="4" height="10" fill="#c4c4c4"/></svg>
<svg style="left:2750px;top:357px;" width="10" height="26" viewBox="0 0 10 26"><circle cx="5" cy="5" r="2.9" fill="#c4c4c4"/><circle cx="5" cy="13" r="2.9" fill="#c4c4c4"/><circle cx="5" cy="21" r="2.9" fill="#c4c4c4"/></svg>
<div style="left:2239px;top:412.3px;font-size:22px;line-height:22px;color:#d2d2d2;" class="t">stretch</div>
<svg style="left:2200px;top:440px;" width="26" height="90" viewBox="0 0 26 90"><text transform="translate(21 77) rotate(-90)" font-size="22" fill="#d2d2d2" letter-spacing="0.45">stretch</text></svg>
<div style="left:2225px;top:434px;width:98px;height:98px;background:#303030;"></div>
<div style="left:2239px;top:448px;width:70px;height:70px;background:transparent;box-shadow:inset 0 0 0 2px #6a6a6a;"></div>
<div style="left:2237px;top:446px;width:5px;height:5px;background:#d6a533;"></div>
<div style="left:2307px;top:446px;width:5px;height:5px;background:#d6a533;"></div>
<div style="left:2237px;top:516px;width:5px;height:5px;background:#d6a533;"></div>
<div style="left:2307px;top:516px;width:5px;height:5px;background:#d6a533;"></div>
<div style="left:2257px;top:466px;width:34px;height:34px;background:transparent;box-shadow:inset 0 0 0 2px #8a8a8a;"></div>
<svg style="left:2258px;top:467px;" width="32" height="32" viewBox="0 0 32 32"><g stroke="#3a9ad9" stroke-width="2.4"><path d="M16 4V28M4 16H28"/></g><g fill="#3a9ad9"><path d="M11 8L16 3L21 8Z"/><path d="M11 24L16 29L21 24Z"/><path d="M8 11L3 16L8 21Z"/><path d="M24 11L29 16L24 21Z"/></g></svg>
<div style="left:2423px;top:411.3px;font-size:24px;line-height:24px;color:#d2d2d2;" class="t">Left</div>
<div style="left:2542px;top:411.3px;font-size:24px;line-height:24px;color:#d2d2d2;" class="t">Top</div>
<div style="left:2662px;top:411.3px;font-size:24px;line-height:24px;color:#d2d2d2;" class="t">Pos Z</div>
<div style="left:2422px;top:440px;width:112px;height:35px;background:#2a2a2a;border-radius:6px;box-shadow:inset 0 0 0 2px #212121;"></div>
<div style="left:2427px;top:445.8px;font-size:24px;line-height:24px;color:#d2d2d2;" class="t">0</div>
<div style="left:2540px;top:440px;width:114px;height:35px;background:#2a2a2a;border-radius:6px;box-shadow:inset 0 0 0 2px #212121;"></div>
<div style="left:2545px;top:445.8px;font-size:24px;line-height:24px;color:#d2d2d2;" class="t">0</div>
<div style="left:2660px;top:440px;width:113px;height:35px;background:#2a2a2a;border-radius:6px;box-shadow:inset 0 0 0 2px #212121;"></div>
<div style="left:2665px;top:445.8px;font-size:24px;line-height:24px;color:#d2d2d2;" class="t">0</div>
<div style="left:2423px;top:483.3px;font-size:24px;line-height:24px;color:#d2d2d2;" class="t">Right</div>
<div style="left:2542px;top:483.3px;font-size:24px;line-height:24px;color:#d2d2d2;" class="t">Bottom</div>
<div style="left:2422px;top:512px;width:112px;height:35px;background:#2a2a2a;border-radius:6px;box-shadow:inset 0 0 0 2px #212121;"></div>
<div style="left:2427px;top:517.8px;font-size:24px;line-height:24px;color:#d2d2d2;" class="t">0</div>
<div style="left:2540px;top:512px;width:114px;height:35px;background:#2a2a2a;border-radius:6px;box-shadow:inset 0 0 0 2px #212121;"></div>
<div style="left:2545px;top:517.8px;font-size:24px;line-height:24px;color:#d2d2d2;" class="t">0</div>
<div style="left:2672px;top:510px;width:100px;height:36px;background:#505050;border-radius:6px;"></div>
<div style="left:2720px;top:510px;width:2px;height:36px;background:#3a3a3a;"></div>
<svg style="left:2683px;top:516px;" width="26" height="24" viewBox="0 0 26 24"><rect x="2" y="2" width="22" height="20" fill="none" stroke="#8c8c8c" stroke-width="2" stroke-dasharray="4 3"/></svg>
<div style="left:2738px;top:516.3px;font-size:24px;line-height:24px;color:#8c8c8c;" class="t">R</div>
<svg style="left:2196.0px;top:563.0px;" width="18" height="16" viewBox="0 0 18 16"><path d="M0 0H18L9.0 16Z" fill="#7a7a7a"/></svg>
<div style="left:2224px;top:559.3px;font-size:24px;line-height:24px;color:#d2d2d2;" class="t">Anchors</div>
<div style="left:2254px;top:594.3px;font-size:24px;line-height:24px;color:#d2d2d2;" class="t">Min</div>
<div style="left:2423px;top:594.3px;font-size:24px;line-height:24px;color:#d2d2d2;" class="t">X</div>
<div style="left:2445px;top:589px;width:90px;height:34px;background:#2a2a2a;border-radius:6px;box-shadow:inset 0 0 0 2px #212121;"></div>
<div style="left:2450px;top:594.3px;font-size:24px;line-height:24px;color:#d2d2d2;" class="t">0</div>
<div style="left:2542px;top:594.3px;font-size:24px;line-height:24px;color:#d2d2d2;" class="t">Y</div>
<div style="left:2564px;top:589px;width:90px;height:34px;background:#2a2a2a;border-radius:6px;box-shadow:inset 0 0 0 2px #212121;"></div>
<div style="left:2569px;top:594.3px;font-size:24px;line-height:24px;color:#d2d2d2;" class="t">0</div>
<div style="left:2254px;top:634.3px;font-size:24px;line-height:24px;color:#d2d2d2;" class="t">Max</div>
<div style="left:2423px;top:634.3px;font-size:24px;line-height:24px;color:#d2d2d2;" class="t">X</div>
<div style="left:2445px;top:629px;width:90px;height:34px;background:#2a2a2a;border-radius:6px;box-shadow:inset 0 0 0 2px #212121;"></div>
<div style="left:2450px;top:634.3px;font-size:24px;line-height:24px;color:#d2d2d2;" class="t">1</div>
<div style="left:2542px;top:634.3px;font-size:24px;line-height:24px;color:#d2d2d2;" class="t">Y</div>
<div style="left:2564px;top:629px;width:90px;height:34px;background:#2a2a2a;border-radius:6px;box-shadow:inset 0 0 0 2px #212121;"></div>
<div style="left:2569px;top:634.3px;font-size:24px;line-height:24px;color:#d2d2d2;" class="t">1</div>
<div style="left:2224px;top:678.3px;font-size:24px;line-height:24px;color:#d2d2d2;" class="t">Pivot</div>
<div style="left:2423px;top:678.3px;font-size:24px;line-height:24px;color:#d2d2d2;" class="t">X</div>
<div style="left:2445px;top:673px;width:90px;height:34px;background:#2a2a2a;border-radius:6px;box-shadow:inset 0 0 0 2px #212121;"></div>
<div style="left:2450px;top:678.3px;font-size:24px;line-height:24px;color:#d2d2d2;" class="t">0.5</div>
<div style="left:2542px;top:678.3px;font-size:24px;line-height:24px;color:#d2d2d2;" class="t">Y</div>
<div style="left:2564px;top:673px;width:90px;height:34px;background:#2a2a2a;border-radius:6px;box-shadow:inset 0 0 0 2px #212121;"></div>
<div style="left:2569px;top:678.3px;font-size:24px;line-height:24px;color:#d2d2d2;" class="t">0.5</div>
<div style="left:2224px;top:734.3px;font-size:24px;line-height:24px;color:#d2d2d2;" class="t">Rotation</div>
<div style="left:2428px;top:734.3px;font-size:24px;line-height:24px;color:#d2d2d2;" class="t">X</div>
<div style="left:2451px;top:729px;width:86px;height:34px;background:#2a2a2a;border-radius:6px;box-shadow:inset 0 0 0 2px #212121;"></div>
<div style="left:2456px;top:734.3px;font-size:24px;line-height:24px;color:#d2d2d2;" class="t">0</div>
<div style="left:2547px;top:734.3px;font-size:24px;line-height:24px;color:#d2d2d2;" class="t">Y</div>
<div style="left:2570px;top:729px;width:86px;height:34px;background:#2a2a2a;border-radius:6px;box-shadow:inset 0 0 0 2px #212121;"></div>
<div style="left:2575px;top:734.3px;font-size:24px;line-height:24px;color:#d2d2d2;" class="t">0</div>
<div style="left:2666px;top:734.3px;font-size:24px;line-height:24px;color:#d2d2d2;" class="t">Z</div>
<div style="left:2688px;top:729px;width:85px;height:34px;background:#2a2a2a;border-radius:6px;box-shadow:inset 0 0 0 2px #212121;"></div>
<div style="left:2693px;top:734.3px;font-size:24px;line-height:24px;color:#d2d2d2;" class="t">0</div>
<div style="left:2224px;top:774.3px;font-size:24px;line-height:24px;color:#d2d2d2;" class="t">Scale</div>
<div style="left:2428px;top:774.3px;font-size:24px;line-height:24px;color:#d2d2d2;" class="t">X</div>
<div style="left:2451px;top:769px;width:86px;height:34px;background:#2a2a2a;border-radius:6px;box-shadow:inset 0 0 0 2px #212121;"></div>
<div style="left:2456px;top:774.3px;font-size:24px;line-height:24px;color:#d2d2d2;" class="t">1</div>
<div style="left:2547px;top:774.3px;font-size:24px;line-height:24px;color:#d2d2d2;" class="t">Y</div>
<div style="left:2570px;top:769px;width:86px;height:34px;background:#2a2a2a;border-radius:6px;box-shadow:inset 0 0 0 2px #212121;"></div>
<div style="left:2575px;top:774.3px;font-size:24px;line-height:24px;color:#d2d2d2;" class="t">1</div>
<div style="left:2666px;top:774.3px;font-size:24px;line-height:24px;color:#d2d2d2;" class="t">Z</div>
<div style="left:2688px;top:769px;width:85px;height:34px;background:#2a2a2a;border-radius:6px;box-shadow:inset 0 0 0 2px #212121;"></div>
<div style="left:2693px;top:774.3px;font-size:24px;line-height:24px;color:#d2d2d2;" class="t">1</div>
<div style="left:2185px;top:822px;width:597px;height:2px;background:#1f1f1f;"></div>
<div style="left:2185px;top:824px;width:597px;height:40px;background:#3e3e3e;"></div>
<div style="left:2185px;top:864px;width:597px;height:1px;background:#2e2e2e;"></div>
<svg style="left:2196.0px;top:836.0px;" width="18" height="16" viewBox="0 0 18 16"><path d="M0 0H18L9.0 16Z" fill="#7a7a7a"/></svg>
<svg style="left:2224px;top:832px;" width="32" height="24" viewBox="0 0 32 24"><path d="M2 12Q16 -2 30 12Q16 26 2 12Z" fill="none" stroke="#c4c4c4" stroke-width="2.4"/><circle cx="16" cy="12" r="5" fill="none" stroke="#c4c4c4" stroke-width="2.6"/></svg>
<div style="left:2305px;top:832.3px;font-size:24px;line-height:24px;color:#d2d2d2;font-weight:bold;" class="t">Canvas Renderer</div>
<svg style="left:2664px;top:832px;" width="24" height="24" viewBox="0 0 24 24"><circle cx="12" cy="12" r="11" fill="#c4c4c4"/><path d="M8.2 9Q8.2 5 12 5Q16 5 16 8.5Q16 11 13 12.5V14.5" fill="none" stroke="#3e3e3e" stroke-width="2.6"/><circle cx="13" cy="18.5" r="1.8" fill="#3e3e3e"/></svg>
<svg style="left:2704px;top:832px;" width="24" height="24" viewBox="0 0 24 24"><g stroke="#c4c4c4" stroke-width="2.4"><path d="M1 7H23M1 17H23"/></g><rect x="13" y="2" width="4" height="10" fill="#c4c4c4"/><rect x="6" y="12" width="4" height="10" fill="#c4c4c4"/></svg>
<svg style="left:2750px;top:831px;" width="10" height="26" viewBox="0 0 10 26"><circle cx="5" cy="5" r="2.9" fill="#c4c4c4"/><circle cx="5" cy="13" r="2.9" fill="#c4c4c4"/><circle cx="5" cy="21" r="2.9" fill="#c4c4c4"/></svg>
<div style="left:2224px;top:880.3px;font-size:24px;line-height:24px;color:#d2d2d2;width:240px;overflow:hidden;" class="t">Cull Transparent Mes</div>
<div style="left:2466px;top:879px;width:27px;height:27px;background:#2a2a2a;border-radius:5px;box-shadow:inset 0 0 0 2px #212121;"></div>
<svg style="left:2470px;top:885px;" width="19" height="15" viewBox="0 0 19 15"><path d="M2 8L7 13L17 2" fill="none" stroke="#e0e0e0" stroke-width="3"/></svg>
<div style="left:2185px;top:929px;width:597px;height:2px;background:#1f1f1f;"></div>
<div style="left:2185px;top:931px;width:597px;height:40px;background:#3e3e3e;"></div>
<div style="left:2185px;top:971px;width:597px;height:1px;background:#2e2e2e;"></div>
<svg style="left:2196.0px;top:943.0px;" width="18" height="16" viewBox="0 0 18 16"><path d="M0 0H18L9.0 16Z" fill="#7a7a7a"/></svg>
<svg style="left:2228px;top:938px;" width="28" height="28" viewBox="0 0 28 28"><rect x="3" y="3" width="22" height="22" fill="none" stroke="#c4c4c4" stroke-width="2.4"/><g fill="#c4c4c4"><rect x="0" y="0" width="6" height="6" rx="1"/><rect x="22" y="0" width="6" height="6" rx="1"/><rect x="0" y="22" width="6" height="6" rx="1"/><rect x="22" y="22" width="6" height="6" rx="1"/><path d="M6 21L12 13L16 18L19 15L22 21Z"/><circle cx="11" cy="9" r="2.5"/></g></svg>
<div style="left:2265px;top:937px;width:27px;height:27px;background:#2a2a2a;border-radius:5px;box-shadow:inset 0 0 0 2px #212121;"></div>
<svg style="left:2269px;top:943px;" width="19" height="15" viewBox="0 0 19 15"><path d="M2 8L7 13L17 2" fill="none" stroke="#e0e0e0" stroke-width="3"/></svg>
<div style="left:2305px;top:939.3px;font-size:24px;line-height:24px;color:#d2d2d2;font-weight:bold;" class="t">Image</div>
<svg style="left:2664px;top:939px;" width="24" height="24" viewBox="0 0 24 24"><circle cx="12" cy="12" r="11" fill="#c4c4c4"/><path d="M8.2 9Q8.2 5 12 5Q16 5 16 8.5Q16 11 13 12.5V14.5" fill="none" stroke="#3e3e3e" stroke-width="2.6"/><circle cx="13" cy="18.5" r="1.8" fill="#3e3e3e"/></svg>
<svg style="left:2704px;top:939px;" width="24" height="24" viewBox="0 0 24 24"><g stroke="#c4c4c4" stroke-width="2.4"><path d="M1 7H23M1 17H23"/></g><rect x="13" y="2" width="4" height="10" fill="#c4c4c4"/><rect x="6" y="12" width="4" height="10" fill="#c4c4c4"/></svg>
<svg style="left:2750px;top:938px;" width="10" height="26" viewBox="0 0 10 26"><circle cx="5" cy="5" r="2.9" fill="#c4c4c4"/><circle cx="5" cy="13" r="2.9" fill="#c4c4c4"/><circle cx="5" cy="21" r="2.9" fill="#c4c4c4"/></svg>
<div style="left:2224px;top:986.3px;font-size:24px;line-height:24px;color:#d2d2d2;" class="t">Source Image</div>
<div style="left:2466px;top:981px;width:307px;height:34px;background:#2a2a2a;border-radius:6px;box-shadow:inset 0 0 0 2px #212121;"></div>
<div style="left:2736px;top:983px;width:35px;height:30px;background:#303030;border-radius:0 5px 5px 0;"></div>
<svg style="left:2742px;top:987px;" width="22" height="22" viewBox="0 0 22 22"><circle cx="11" cy="11" r="9" fill="none" stroke="#c4c4c4" stroke-width="2"/><circle cx="11" cy="11" r="3.5" fill="#c4c4c4"/></svg>
<svg style="left:2473px;top:987px;" width="22" height="22" viewBox="0 0 22 22"><rect x="2" y="2" width="18" height="18" fill="none" stroke="#9a78e0" stroke-width="2"/><circle cx="11" cy="11" r="5" fill="#c4c4c4"/></svg>
<div style="left:2498px;top:986.3px;font-size:24px;line-height:24px;color:#d2d2d2;" class="t">Background</div>
<div style="left:2224px;top:1026.3px;font-size:24px;line-height:24px;color:#d2d2d2;" class="t">Color</div>
<div style="left:2466px;top:1021px;width:307px;height:34px;background:#2a2a2a;border-radius:6px;box-shadow:inset 0 0 0 2px #212121;"></div>
<div style="left:2467px;top:1022px;width:269px;height:32px;background:#ffffff;"></div>
<div style="left:2572px;top:1048px;width:164px;height:6px;background:#000000;"></div>
<svg style="left:2744px;top:1026px;" width="24" height="24" viewBox="0 0 24 24"><path d="M3 21L14 10" stroke="#c4c4c4" stroke-width="3.4"/><path d="M12 6L18 12M15 3Q18 0 21 3Q24 6 21 9L18 12L12 6Z" fill="#c4c4c4" stroke="#c4c4c4" stroke-width="2"/></svg>
<div style="left:2224px;top:1066.3px;font-size:24px;line-height:24px;color:#d2d2d2;" class="t">Material</div>
<div style="left:2466px;top:1061px;width:307px;height:34px;background:#2a2a2a;border-radius:6px;box-shadow:inset 0 0 0 2px #212121;"></div>
<div style="left:2736px;top:1063px;width:35px;height:30px;background:#303030;border-radius:0 5px 5px 0;"></div>
<svg style="left:2742px;top:1067px;" width="22" height="22" viewBox="0 0 22 22"><circle cx="11" cy="11" r="9" fill="none" stroke="#c4c4c4" stroke-width="2"/><circle cx="11" cy="11" r="3.5" fill="#c4c4c4"/></svg>
<div style="left:2472px;top:1066.3px;font-size:24px;line-height:24px;color:#d2d2d2;" class="t">None (Material)</div>
<div style="left:2224px;top:1106.3px;font-size:24px;line-height:24px;color:#d2d2d2;" class="t">Raycast Target</div>
<div style="left:2466px;top:1105px;width:27px;height:27px;background:#2a2a2a;border-radius:5px;box-shadow:inset 0 0 0 2px #212121;"></div>
<svg style="left:2470px;top:1111px;" width="19" height="15" viewBox="0 0 19 15"><path d="M2 8L7 13L17 2" fill="none" stroke="#e0e0e0" stroke-width="3"/></svg>
<svg style="left:2200.5px;top:1149.5px;" width="15" height="17" viewBox="0 0 15 17"><path d="M0 0V17L15 8.5Z" fill="#7a7a7a"/></svg>
<div style="left:2224px;top:1146.3px;font-size:24px;line-height:24px;color:#d2d2d2;" class="t">Raycast Padding</div>
<div style="left:2224px;top:1186.3px;font-size:24px;line-height:24px;color:#d2d2d2;" class="t">Maskable</div>
<div style="left:2466px;top:1185px;width:27px;height:27px;background:#2a2a2a;border-radius:5px;box-shadow:inset 0 0 0 2px #212121;"></div>
<svg style="left:2470px;top:1191px;" width="19" height="15" viewBox="0 0 19 15"><path d="M2 8L7 13L17 2" fill="none" stroke="#e0e0e0" stroke-width="3"/></svg>
<div style="left:2229px;top:1226.3px;font-size:24px;line-height:24px;color:#d2d2d2;" class="t">Image Type</div>
<div style="left:2473px;top:1222px;width:293px;height:32px;background:#515151;border-radius:6px;box-shadow:inset 0 0 0 1px #303030;"></div>
<div style="left:2479px;top:1226.3px;font-size:24px;line-height:24px;color:#d2d2d2;" class="t">Sliced</div>
<svg style="left:2740.0px;top:1234.5px;" width="16" height="9" viewBox="0 0 16 9"><path d="M0 0H16L8.0 9Z" fill="#c4c4c4"/></svg>
<div style="left:2260px;top:1266.3px;font-size:24px;line-height:24px;color:#d2d2d2;" class="t">Fill Center</div>
<div style="left:2472px;top:1265px;width:27px;height:27px;background:#2a2a2a;border-radius:5px;box-shadow:inset 0 0 0 2px #212121;"></div>
<svg style="left:2476px;top:1271px;" width="19" height="15" viewBox="0 0 19 15"><path d="M2 8L7 13L17 2" fill="none" stroke="#e0e0e0" stroke-width="3"/></svg>
<div style="left:2260px;top:1306.3px;font-size:24px;line-height:24px;color:#d2d2d2;width:210px;overflow:hidden;" class="t">Pixels Per Unit Mul</div>
<div style="left:2472px;top:1300px;width:295px;height:35px;background:#2a2a2a;border-radius:6px;box-shadow:inset 0 0 0 2px #212121;"></div>
<div style="left:2477px;top:1305.8px;font-size:24px;line-height:24px;color:#d2d2d2;" class="t">1</div>
<div style="left:2185px;top:1355px;width:597px;height:2px;background:#1f1f1f;"></div>
<div style="left:2185px;top:1357px;width:597px;height:40px;background:#3e3e3e;"></div>
<div style="left:2185px;top:1397px;width:597px;height:1px;background:#2e2e2e;"></div>
<svg style="left:2196.0px;top:1369.0px;" width="18" height="16" viewBox="0 0 18 16"><path d="M0 0H18L9.0 16Z" fill="#7a7a7a"/></svg>
<svg style="left:2228px;top:1364px;" width="26" height="26" viewBox="0 0 26 26"><rect x="2" y="2" width="22" height="22" rx="2" fill="none" stroke="#c4c4c4" stroke-width="2.2"/><g fill="#c4c4c4"><rect x="6" y="7" width="14" height="3"/><rect x="6" y="12" width="14" height="3"/><rect x="6" y="17" width="14" height="3"/></g></svg>
<div style="left:2265px;top:1363px;width:27px;height:27px;background:#2a2a2a;border-radius:5px;box-shadow:inset 0 0 0 2px #212121;"></div>
<svg style="left:2269px;top:1369px;" width="19" height="15" viewBox="0 0 19 15"><path d="M2 8L7 13L17 2" fill="none" stroke="#e0e0e0" stroke-width="3"/></svg>
<div style="left:2305px;top:1365.3px;font-size:24px;line-height:24px;color:#d2d2d2;font-weight:bold;" class="t">Vertical Layout Group</div>
<svg style="left:2664px;top:1365px;" width="24" height="24" viewBox="0 0 24 24"><circle cx="12" cy="12" r="11" fill="#c4c4c4"/><path d="M8.2 9Q8.2 5 12 5Q16 5 16 8.5Q16 11 13 12.5V14.5" fill="none" stroke="#3e3e3e" stroke-width="2.6"/><circle cx="13" cy="18.5" r="1.8" fill="#3e3e3e"/></svg>
<svg style="left:2704px;top:1365px;" width="24" height="24" viewBox="0 0 24 24"><g stroke="#c4c4c4" stroke-width="2.4"><path d="M1 7H23M1 17H23"/></g><rect x="13" y="2" width="4" height="10" fill="#c4c4c4"/><rect x="6" y="12" width="4" height="10" fill="#c4c4c4"/></svg>
<svg style="left:2750px;top:1364px;" width="10" height="26" viewBox="0 0 10 26"><circle cx="5" cy="5" r="2.9" fill="#c4c4c4"/><circle cx="5" cy="13" r="2.9" fill="#c4c4c4"/><circle cx="5" cy="21" r="2.9" fill="#c4c4c4"/></svg>
<svg style="left:2200.5px;top:1415.5px;" width="15" height="17" viewBox="0 0 15 17"><path d="M0 0V17L15 8.5Z" fill="#7a7a7a"/></svg>
<div style="left:2224px;top:1413.3px;font-size:24px;line-height:24px;color:#d2d2d2;" class="t">Padding</div>
<div style="left:2224px;top:1452.3px;font-size:24px;line-height:24px;color:#d2d2d2;" class="t">Spacing</div>
<div style="left:2466px;top:1447px;width:307px;height:34px;background:#2a2a2a;border-radius:6px;box-shadow:inset 0 0 0 2px #212121;"></div>
<div style="left:2471px;top:1452.3px;font-size:24px;line-height:24px;color:#d2d2d2;" class="t">0</div>
<div style="left:2224px;top:1493.3px;font-size:24px;line-height:24px;color:#d2d2d2;" class="t">Child Alignment</div>
<div style="left:2467px;top:1489px;width:305px;height:31px;background:#515151;border-radius:6px;box-shadow:inset 0 0 0 1px #303030;"></div>
<div style="left:2473px;top:1492.8px;font-size:24px;line-height:24px;color:#d2d2d2;" class="t">Upper Left</div>
<svg style="left:2746.0px;top:1501.0px;" width="16" height="9" viewBox="0 0 16 9"><path d="M0 0H16L8.0 9Z" fill="#c4c4c4"/></svg>
<div style="left:2224px;top:1533.3px;font-size:24px;line-height:24px;color:#d2d2d2;width:242px;overflow:hidden;" class="t">Reverse Arrangement</div>
<div style="left:2466px;top:1530px;width:27px;height:27px;background:#2a2a2a;border-radius:5px;box-shadow:inset 0 0 0 2px #212121;"></div>
<div style="left:2224px;top:1573.3px;font-size:24px;line-height:24px;color:#d2d2d2;" class="t">Control Child Size</div>
<div style="left:2466px;top:1571px;width:27px;height:27px;background:#2a2a2a;border-radius:5px;box-shadow:inset 0 0 0 2px #212121;"></div>
<div style="left:2502px;top:1573.3px;font-size:24px;line-height:24px;color:#d2d2d2;" class="t">Width</div>
<div style="left:2570px;top:1571px;width:27px;height:27px;background:#2a2a2a;border-radius:5px;box-shadow:inset 0 0 0 2px #212121;"></div>
<div style="left:2605px;top:1573.3px;font-size:24px;line-height:24px;color:#d2d2d2;" class="t">Heigh</div>
<div style="left:2224px;top:1613.3px;font-size:24px;line-height:24px;color:#d2d2d2;" class="t">Use Child Scale</div>
<div style="left:2466px;top:1611px;width:27px;height:27px;background:#2a2a2a;border-radius:5px;box-shadow:inset 0 0 0 2px #212121;"></div>
<div style="left:2502px;top:1613.3px;font-size:24px;line-height:24px;color:#d2d2d2;" class="t">Width</div>
<div style="left:2570px;top:1611px;width:27px;height:27px;background:#2a2a2a;border-radius:5px;box-shadow:inset 0 0 0 2px #212121;"></div>
<div style="left:2605px;top:1613.3px;font-size:24px;line-height:24px;color:#d2d2d2;" class="t">Heigh</div>
<div style="left:2224px;top:1653.3px;font-size:24px;line-height:24px;color:#d2d2d2;" class="t">Child Force Expand</div>
<div style="left:2466px;top:1651px;width:27px;height:27px;background:#2a2a2a;border-radius:5px;box-shadow:inset 0 0 0 2px #212121;"></div>
<svg style="left:2470px;top:1657px;" width="19" height="15" viewBox="0 0 19 15"><path d="M2 8L7 13L17 2" fill="none" stroke="#e0e0e0" stroke-width="3"/></svg>
<div style="left:2502px;top:1653.3px;font-size:24px;line-height:24px;color:#d2d2d2;" class="t">Width</div>
<div style="left:2570px;top:1651px;width:27px;height:27px;background:#2a2a2a;border-radius:5px;box-shadow:inset 0 0 0 2px #212121;"></div>
<svg style="left:2574px;top:1657px;" width="19" height="15" viewBox="0 0 19 15"><path d="M2 8L7 13L17 2" fill="none" stroke="#e0e0e0" stroke-width="3"/></svg>
<div style="left:2605px;top:1653.3px;font-size:24px;line-height:24px;color:#d2d2d2;" class="t">Heigh</div>
<div style="left:2185px;top:1699px;width:597px;height:2px;background:#1f1f1f;"></div>
<div style="left:2217px;top:1712px;width:64px;height:64px;background:#303030;"></div>
<div style="left:2225px;top:1720px;width:49px;height:49px;background:#ffffff;"></div>
<div style="left:2297px;top:1714.8px;font-size:25px;line-height:25px;color:#b0b0b0;letter-spacing:1.4px;" class="t">Default UI Material (Material)</div>
<svg style="left:2722px;top:1715px;" width="24" height="24" viewBox="0 0 24 24"><circle cx="12" cy="12" r="11" fill="#c4c4c4"/><path d="M8.2 9Q8.2 5 12 5Q16 5 16 8.5Q16 11 13 12.5V14.5" fill="none" stroke="#383838" stroke-width="2.6"/><circle cx="13" cy="18.5" r="1.8" fill="#383838"/></svg>
<svg style="left:2760px;top:1714px;" width="10" height="26" viewBox="0 0 10 26"><circle cx="5" cy="5" r="2.9" fill="#c4c4c4"/><circle cx="5" cy="13" r="2.9" fill="#c4c4c4"/><circle cx="5" cy="21" r="2.9" fill="#c4c4c4"/></svg>
<div style="left:2292px;top:1762.3px;font-size:24px;line-height:24px;color:#7a7a7a;" class="t">Shader</div>
<div style="left:2395px;top:1758px;width:282px;height:32px;background:#454545;border-radius:6px;box-shadow:inset 0 0 0 1px #303030;"></div>
<div style="left:2401px;top:1762.3px;font-size:24px;line-height:24px;color:#9a9a9a;" class="t">UI/Default</div>
<svg style="left:2651.0px;top:1770.5px;" width="16" height="9" viewBox="0 0 16 9"><path d="M0 0H16L8.0 9Z" fill="#7a7a7a"/></svg>
<div style="left:2687px;top:1758px;width:84px;height:32px;background:#454545;border-radius:6px;"></div>
<div style="left:2700px;top:1762.3px;font-size:24px;line-height:24px;color:#9a9a9a;" class="t">Edit...</div>
<svg style="left:2200.0px;top:1778.0px;" width="14" height="18" viewBox="0 0 14 18"><path d="M0 0V18L14 9.0Z" fill="#7a7a7a"/></svg>
<div style="left:2185px;top:1807px;width:597px;height:2px;background:#1f1f1f;"></div>
<div style="left:2185px;top:1830px;width:597px;height:2px;background:#1f1f1f;"></div>
<div style="left:2255px;top:1850px;width:456px;height:43px;background:#585858;border-radius:6px;"></div>
<div style="left:2255px;width:456px;text-align:center;top:1860.3px;font-size:24px;line-height:24px;color:#d2d2d2;" class="t">Add Component</div>
<div style="left:2185px;top:1894px;width:622px;height:2px;background:#262626;"></div>
<div style="left:2185px;top:1896px;width:622px;height:40px;background:#3c3c3c;"></div>
<div style="left:2185px;top:1896px;width:9px;height:40px;background:#3a3a3a;"></div>
<div style="left:2185px;top:1936px;width:622px;height:2px;background:#232323;"></div>
<div style="left:2194px;top:1896px;width:2px;height:40px;background:#232323;"></div>
<div style="left:2351px;top:1896px;width:2px;height:40px;background:#232323;"></div>
<div style="left:2773px;top:1896px;width:2px;height:40px;background:#232323;"></div>
<div style="left:2202px;top:1905.3px;font-size:24px;line-height:24px;color:#d2d2d2;font-weight:bold;" class="t">MainPanel</div>
<svg style="left:2328.0px;top:1911.5px;" width="16" height="9" viewBox="0 0 16 9"><path d="M0 0H16L8.0 9Z" fill="#c4c4c4"/></svg>
<div style="left:2359px;top:1912px;width:410px;height:2px;background:#5a5a5a;"></div>
<div style="left:2359px;top:1919px;width:410px;height:2px;background:#5a5a5a;"></div>
<svg style="left:2786px;top:1903px;" width="10" height="26" viewBox="0 0 10 26"><circle cx="5" cy="5" r="2.9" fill="#c4c4c4"/><circle cx="5" cy="13" r="2.9" fill="#c4c4c4"/><circle cx="5" cy="21" r="2.9" fill="#c4c4c4"/></svg>
<div style="left:112px;top:1199px;width:970px;height:37px;background:#282828;border-radius:8px 8px 0 0;"></div>
<div style="left:112px;top:1199px;width:146px;height:37px;background:#3c3c3c;border-radius:8px 8px 0 0;"></div>
<svg style="left:124px;top:1209px;" width="28" height="18" viewBox="0 0 28 18"><path d="M7 1H21Q27 1 27 9Q27 17 22 17Q19 17 17 13H11Q9 17 6 17Q1 17 1 9Q1 1 7 1Z" fill="#c4c4c4"/><path d="M5 9H11M8 6V12" stroke="#3c3c3c" stroke-width="2"/><circle cx="19" cy="7.5" r="1.6" fill="#3c3c3c"/><circle cx="22" cy="10.5" r="1.6" fill="#3c3c3c"/></svg>
<div style="left:159px;top:1207.3px;font-size:24px;line-height:24px;color:#d2d2d2;" class="t">Game</div>
<svg style="left:1052px;top:1203px;" width="10" height="26" viewBox="0 0 10 26"><circle cx="5" cy="5" r="2.9" fill="#c4c4c4"/><circle cx="5" cy="13" r="2.9" fill="#c4c4c4"/><circle cx="5" cy="21" r="2.9" fill="#c4c4c4"/></svg>
<div style="left:112px;top:1236px;width:970px;height:42px;background:#3c3c3c;"></div>
<div style="left:112px;top:1278px;width:970px;height:2px;background:#232323;"></div>
<div style="left:272px;top:1236px;width:2px;height:42px;background:#262626;"></div>
<div style="left:592px;top:1236px;width:2px;height:42px;background:#262626;"></div>
<div style="left:836px;top:1236px;width:2px;height:42px;background:#262626;"></div>
<div style="left:1056px;top:1236px;width:2px;height:42px;background:#262626;"></div>
<div style="left:121px;top:1245.3px;font-size:24px;line-height:24px;color:#d2d2d2;" class="t">Display 1</div>
<svg style="left:247.0px;top:1252.5px;" width="16" height="9" viewBox="0 0 16 9"><path d="M0 0H16L8.0 9Z" fill="#c4c4c4"/></svg>
<div style="left:280px;top:1245.3px;font-size:24px;line-height:24px;color:#d2d2d2;" class="t">Free Aspect</div>
<svg style="left:568.0px;top:1252.5px;" width="16" height="9" viewBox="0 0 16 9"><path d="M0 0H16L8.0 9Z" fill="#c4c4c4"/></svg>
<div style="left:606px;top:1246.3px;font-size:24px;line-height:24px;color:#d2d2d2;" class="t">Scale</div>
<div style="left:682px;top:1256px;width:60px;height:3px;background:#5e5e5e;"></div>
<div style="left:682px;top:1248px;width:20px;height:20px;background:#a4a4a4;border-radius:50%;"></div>
<div style="left:753px;top:1246.3px;font-size:24px;line-height:24px;color:#d2d2d2;" class="t">1x</div>
<div style="left:847px;top:1245.3px;font-size:24px;line-height:24px;color:#d2d2d2;" class="t">Maximize On Play</div>
<div style="left:1067px;top:1245.3px;font-size:24px;line-height:24px;color:#d2d2d2;width:15px;overflow:hidden;" class="t">M</div>
<div style="left:112px;top:1280px;width:970px;height:658px;background:radial-gradient(4123px 1500px at 468px 1854px,#aaa9a7 79.8%,#aeadab 96.9%,#b0aeac 99.8%,#c4c6c6 100.27%,#dfe4e4 100.8%,#e0e6e6 101.8%,#d4dce2 103.1%,rgba(194,203,216,0) 105.6%),linear-gradient(to bottom,#a6adbb 0px,#aab1bf 90px,#b3bccb 180px,#c2cbd8 270px,#c8d2dc 657px);box-shadow:inset 0 0 0 1px #8c8a88;"></div>
<div style="left:112px;top:1280px;width:110px;height:110px;background:#e8352a;"></div>
<div style="left:112px;top:1445px;width:110px;height:110px;background:#e8352a;"></div>
<div style="left:112px;top:1609px;width:110px;height:110px;background:#e8352a;"></div>
<div style="left:112px;top:1774px;width:110px;height:110px;background:#e8352a;"></div>
<div style="left:1087px;top:1199px;width:567px;height:37px;background:#282828;border-radius:8px 8px 0 0;"></div>
<div style="left:1087px;top:1199px;width:174px;height:37px;background:#3c3c3c;border-radius:8px 8px 0 0;"></div>
<svg style="left:1105px;top:1207px;" width="20" height="22" viewBox="0 0 20 22"><rect x="0" y="0" width="20" height="22" rx="2" fill="#c4c4c4"/><g stroke="#3c3c3c" stroke-width="2"><path d="M4 6H16M4 10H16M4 14H16M4 18H12"/></g></svg>
<div style="left:1136px;top:1207.3px;font-size:24px;line-height:24px;color:#d2d2d2;" class="t">Console</div>
<svg style="left:1623px;top:1203px;" width="10" height="26" viewBox="0 0 10 26"><circle cx="5" cy="5" r="2.9" fill="#c4c4c4"/><circle cx="5" cy="13" r="2.9" fill="#c4c4c4"/><circle cx="5" cy="21" r="2.9" fill="#c4c4c4"/></svg>
<div style="left:1087px;top:1236px;width:567px;height:41px;background:#3c3c3c;"></div>
<div style="left:1087px;top:1277px;width:567px;height:2px;background:#232323;"></div>
<div style="left:1200px;top:1236px;width:2px;height:41px;background:#262626;"></div>
<div style="left:1317px;top:1236px;width:2px;height:41px;background:#262626;"></div>
<div style="left:1447px;top:1236px;width:2px;height:41px;background:#262626;"></div>
<div style="left:1515px;top:1236px;width:2px;height:41px;background:#262626;"></div>
<div style="left:1583px;top:1236px;width:2px;height:41px;background:#262626;"></div>
<div style="left:1449px;top:1236px;width:66px;height:41px;background:#4a4a4a;"></div>
<div style="left:1517px;top:1236px;width:66px;height:41px;background:#4a4a4a;"></div>
<div style="left:1585px;top:1236px;width:66px;height:41px;background:#4a4a4a;"></div>
<div style="left:1095px;top:1245.3px;font-size:24px;line-height:24px;color:#d2d2d2;" class="t">Clear</div>
<div style="left:1165px;top:1246px;width:2px;height:22px;background:#2a2a2a;"></div>
<svg style="left:1175.0px;top:1252.5px;" width="16" height="9" viewBox="0 0 16 9"><path d="M0 0H16L8.0 9Z" fill="#c4c4c4"/></svg>
<div style="left:1210px;top:1245.3px;font-size:24px;line-height:24px;color:#d2d2d2;" class="t">Collapse</div>
<svg style="left:1459px;top:1244px;" width="28" height="28" viewBox="0 0 28 28"><circle cx="13" cy="13" r="12" fill="#8a8a8a"/><path d="M18 22L25 27L22 19Z" fill="#8a8a8a"/><rect x="11.5" y="5" width="3" height="10" fill="#4a4a4a"/><circle cx="13" cy="19" r="1.8" fill="#4a4a4a"/></svg>
<div style="left:1492px;top:1245.3px;font-size:24px;line-height:24px;color:#d2d2d2;" class="t">0</div>
<svg style="left:1527px;top:1245px;" width="28" height="26" viewBox="0 0 28 26"><path d="M14 1L27 25H1Z" fill="#8a8a8a"/><rect x="12.5" y="8" width="3" height="10" fill="#4a4a4a"/><circle cx="14" cy="21" r="1.8" fill="#4a4a4a"/></svg>
<div style="left:1560px;top:1245.3px;font-size:24px;line-height:24px;color:#d2d2d2;" class="t">0</div>
<svg style="left:1596px;top:1244px;" width="28" height="28" viewBox="0 0 28 28"><path d="M8 1H20L27 8V20L20 27H8L1 20V8Z" fill="#c4c4c4"/><rect x="12.5" y="6" width="3" height="11" fill="#4a4a4a"/><circle cx="14" cy="21" r="1.8" fill="#4a4a4a"/></svg>
<div style="left:1628px;top:1245.3px;font-size:24px;line-height:24px;color:#d2d2d2;" class="t">0</div>
<div style="left:1087px;top:1279px;width:567px;height:658px;background:#383838;"></div>
<div style="left:1087px;top:1739px;width:567px;height:2px;background:#232323;"></div>
<div style="left:1658px;top:1199px;width:523px;height:37px;background:#282828;border-radius:8px 8px 0 0;"></div>
<div style="left:1658px;top:1199px;width:162px;height:37px;background:#3c3c3c;border-radius:8px 8px 0 0;"></div>
<svg style="left:1674px;top:1208px;" width="24" height="20" viewBox="0 0 24 20"><path d="M0 2Q0 0 2 0H9L11 3H22Q24 3 24 5V18Q24 20 22 20H2Q0 20 0 18Z" fill="#c4c4c4"/></svg>
<div style="left:1707px;top:1207.3px;font-size:24px;line-height:24px;color:#d2d2d2;" class="t">Project</div>
<svg style="left:2111px;top:1205px;" width="20" height="22" viewBox="0 0 20 22"><path d="M14.5 11V7.5Q14.5 2 9.8 2Q6.8 2 5.2 4.5" fill="none" stroke="#c4c4c4" stroke-width="2.2" stroke-linecap="round"/><rect x="2" y="11.2" width="15" height="9.5" rx="1.5" fill="none" stroke="#c4c4c4" stroke-width="2.2"/></svg>
<svg style="left:2150px;top:1204px;" width="10" height="26" viewBox="0 0 10 26"><circle cx="5" cy="5" r="2.9" fill="#c4c4c4"/><circle cx="5" cy="13" r="2.9" fill="#c4c4c4"/><circle cx="5" cy="21" r="2.9" fill="#c4c4c4"/></svg>
<div style="left:1658px;top:1236px;width:523px;height:41px;background:#3c3c3c;"></div>
<div style="left:1658px;top:1277px;width:523px;height:2px;background:#232323;"></div>
<svg style="left:1672px;top:1245px;" width="26" height="26" viewBox="0 0 26 26"><path d="M13 2V24M2 13H24" stroke="#c4c4c4" stroke-width="3.4"/></svg>
<svg style="left:1704.0px;top:1252.5px;" width="16" height="9" viewBox="0 0 16 9"><path d="M0 0H16L8.0 9Z" fill="#c4c4c4"/></svg>
<div style="left:1748px;top:1241px;width:204px;height:32px;background:#2a2a2a;border-radius:8px;box-shadow:inset 0 0 0 2px #1e1e1e;"></div>
<svg style="left:1757px;top:1248px;" width="20" height="18" viewBox="0 0 20 18"><circle cx="6" cy="6" r="4.5" fill="none" stroke="#c4c4c4" stroke-width="2.2"/><path d="M9 9L14 14" stroke="#c4c4c4" stroke-width="2.6"/></svg>
<div style="left:1956px;top:1236px;width:2px;height:41px;background:#262626;"></div>
<div style="left:2008px;top:1236px;width:2px;height:41px;background:#262626;"></div>
<div style="left:2060px;top:1236px;width:2px;height:41px;background:#262626;"></div>
<div style="left:2112px;top:1236px;width:2px;height:41px;background:#262626;"></div>
<svg style="left:1970px;top:1243px;" width="26" height="28" viewBox="0 0 26 28"><rect x="7" y="1" width="10" height="10" fill="#c4c4c4"/><circle cx="8" cy="19" r="7" fill="#c4c4c4"/><path d="M16 8L25 21H13Z" fill="#c4c4c4"/></svg>
<svg style="left:2022px;top:1245px;" width="24" height="24" viewBox="0 0 24 24"><path d="M1 13L12 2H22V12L11 23Z" fill="#c4c4c4"/><circle cx="17" cy="7" r="2" fill="#3c3c3c"/></svg>
<svg style="left:2074px;top:1244px;" width="26" height="26" viewBox="0 0 26 26"><path d="M13 1L16.5 9.5L25 10L18.5 16L20.5 25L13 20.5L5.5 25L7.5 16L1 10L9.5 9.5Z" fill="#8a8a8a"/></svg>
<svg style="left:2124px;top:1244px;" width="30" height="26" viewBox="0 0 30 26"><path d="M2 13Q15 0 28 13Q15 25 2 13Z" fill="none" stroke="#c4c4c4" stroke-width="2.2"/><path d="M4 24L26 2" stroke="#c4c4c4" stroke-width="2.6"/></svg>
<div style="left:2156px;top:1246.3px;font-size:24px;line-height:24px;color:#d2d2d2;" class="t">9</div>
<div style="left:1658px;top:1279px;width:220px;height:658px;background:#383838;"></div>
<div style="left:1878px;top:1279px;width:2px;height:658px;background:#232323;"></div>
<div style="left:1880px;top:1279px;width:301px;height:618px;background:#333333;"></div>
<div style="left:1880px;top:1279px;width:301px;height:40px;background:#3e3e3e;"></div>
<div style="left:1880px;top:1319px;width:301px;height:2px;background:#2a2a2a;"></div>
<div style="left:1889px;top:1287.3px;font-size:24px;line-height:24px;color:#d2d2d2;font-weight:bold;" class="t">Assets</div>
<svg style="left:1916px;top:1328px;" width="24" height="20" viewBox="0 0 24 20"><path d="M0 2Q0 0 2 0H9L11 3H22Q24 3 24 5V18Q24 20 22 20H2Q0 20 0 18Z" fill="#c4c4c4"/></svg>
<div style="left:1949px;top:1326.3px;font-size:24px;line-height:24px;color:#d2d2d2;" class="t">Scenes</div>
<svg style="left:1666.0px;top:1287.0px;" width="18" height="16" viewBox="0 0 18 16"><path d="M0 0H18L9.0 16Z" fill="#7a7a7a"/></svg>
<svg style="left:1694px;top:1282px;" width="24" height="24" viewBox="0 0 24 24"><path d="M12 1L15.2 8.5L23 9.2L17 14.5L19 22.5L12 18.2L5 22.5L7 14.5L1 9.2L8.8 8.5Z" fill="#f4c430"/></svg>
<div style="left:1728px;top:1282.3px;font-size:24px;line-height:24px;color:#d2d2d2;font-weight:bold;" class="t">Favorites</div>
<svg style="left:1722px;top:1314px;" width="24" height="24" viewBox="0 0 24 24"><circle cx="9" cy="9" r="7" fill="none" stroke="#c4c4c4" stroke-width="2"/><path d="M14 14L21 21" stroke="#c4c4c4" stroke-width="3"/></svg>
<div style="left:1755px;top:1314.3px;font-size:24px;line-height:24px;color:#d2d2d2;width:122px;overflow:hidden;" class="t">All Scenes</div>
<svg style="left:1722px;top:1346px;" width="24" height="24" viewBox="0 0 24 24"><circle cx="9" cy="9" r="7" fill="none" stroke="#c4c4c4" stroke-width="2"/><path d="M14 14L21 21" stroke="#c4c4c4" stroke-width="3"/></svg>
<div style="left:1755px;top:1346.3px;font-size:24px;line-height:24px;color:#d2d2d2;width:122px;overflow:hidden;" class="t">All Materia</div>
<svg style="left:1722px;top:1378px;" width="24" height="24" viewBox="0 0 24 24"><circle cx="9" cy="9" r="7" fill="none" stroke="#c4c4c4" stroke-width="2"/><path d="M14 14L21 21" stroke="#c4c4c4" stroke-width="3"/></svg>
<div style="left:1755px;top:1378.3px;font-size:24px;line-height:24px;color:#d2d2d2;width:122px;overflow:hidden;" class="t">All Models</div>
<svg style="left:1722px;top:1410px;" width="24" height="24" viewBox="0 0 24 24"><circle cx="9" cy="9" r="7" fill="none" stroke="#c4c4c4" stroke-width="2"/><path d="M14 14L21 21" stroke="#c4c4c4" stroke-width="3"/></svg>
<div style="left:1755px;top:1410.3px;font-size:24px;line-height:24px;color:#d2d2d2;width:122px;overflow:hidden;" class="t">All Prefabs</div>
<div style="left:1658px;top:1469px;width:220px;height:32px;background:#4b4b4b;"></div>
<svg style="left:1666.0px;top:1478.0px;" width="18" height="16" viewBox="0 0 18 16"><path d="M0 0H18L9.0 16Z" fill="#7a7a7a"/></svg>
<svg style="left:1694px;top:1475px;" width="28" height="20" viewBox="0 0 28 20"><path d="M1 2H9L11 5H21V8H6L1 19Z" fill="none" stroke="#c4c4c4" stroke-width="2"/><path d="M5 9H27L22 19H1Z" fill="#c4c4c4"/></svg>
<div style="left:1728px;top:1473.3px;font-size:24px;line-height:24px;color:#d2d2d2;font-weight:bold;" class="t">Assets</div>
<svg style="left:1722px;top:1507px;" width="24" height="20" viewBox="0 0 24 20"><path d="M0 2Q0 0 2 0H9L11 3H22Q24 3 24 5V18Q24 20 22 20H2Q0 20 0 18Z" fill="#c4c4c4"/></svg>
<div style="left:1755px;top:1504.3px;font-size:24px;line-height:24px;color:#d2d2d2;" class="t">Scenes</div>
<svg style="left:1668.5px;top:1539.5px;" width="15" height="17" viewBox="0 0 15 17"><path d="M0 0V17L15 8.5Z" fill="#7a7a7a"/></svg>
<svg style="left:1694px;top:1538px;" width="24" height="20" viewBox="0 0 24 20"><path d="M0 2Q0 0 2 0H9L11 3H22Q24 3 24 5V18Q24 20 22 20H2Q0 20 0 18Z" fill="#c4c4c4"/></svg>
<div style="left:1728px;top:1536.3px;font-size:24px;line-height:24px;color:#d2d2d2;font-weight:bold;" class="t">Packages</div>
<div style="left:1880px;top:1897px;width:301px;height:40px;background:#3e3e3e;"></div>
<div style="left:1880px;top:1895px;width:301px;height:2px;background:#2a2a2a;"></div>
<div style="left:2058px;top:1916px;width:90px;height:3px;background:#5e5e5e;"></div>
<div style="left:2038px;top:1907px;width:20px;height:20px;background:#a4a4a4;border-radius:50%;"></div>
<div style="left:2599px;top:1942px;width:1px;height:38px;background:#2a2a2a;"></div>
<div style="left:2650px;top:1942px;width:1px;height:38px;background:#2a2a2a;"></div>
<div style="left:2702px;top:1942px;width:1px;height:38px;background:#2a2a2a;"></div>
<div style="left:2754px;top:1942px;width:1px;height:38px;background:#2a2a2a;"></div>
<svg style="left:2608px;top:1945px;" width="32" height="33" viewBox="0 0 32 33"><g fill="#f4c242"><path d="M10 8Q14 4 19 5Q26 7 27 16Q28 24 24 31L14 31Q6 27 6 18Q6 12 10 8Z"/></g><g stroke="#f4c242" stroke-width="2.6" fill="none" stroke-linecap="round"><path d="M9 9L7 3M20 6L24 2M7 13L3 8M26 13L29 7M7 20L2 23M6 26L4 31"/></g><path d="M27 11Q17 15 19 31H30V11Z" fill="#1a1a1a"/><rect x="20.5" y="15" width="4.2" height="10" rx="1.5" fill="#f4c242"/><circle cx="22.6" cy="28.8" r="2.2" fill="#f4c242"/></svg>
<svg style="left:2662px;top:1946px;" width="30" height="30" viewBox="0 0 30 30"><g fill="#c4c4c4"><ellipse cx="14" cy="6" rx="12" ry="5"/><path d="M2 10Q14 18 26 10V15Q14 23 2 15Z"/><path d="M2 19Q14 27 26 19V23Q14 31 2 23Z"/></g><path d="M3 2L28 28" stroke="#1a1a1a" stroke-width="5"/><path d="M3 2L28 28" stroke="#c4c4c4" stroke-width="2.2"/></svg>
<svg style="left:2714px;top:1946px;" width="30" height="30" viewBox="0 0 30 30"><path d="M15 7A7 7 0 0 1 20 19L19 22H11L10 19A7 7 0 0 1 15 7Z" fill="#c4c4c4"/><path d="M12 23H18V25Q15 27.5 12 25Z" fill="#c4c4c4"/><path d="M4 12A12 12 0 0 1 24 6M26 18A12 12 0 0 1 6 24" fill="none" stroke="#c4c4c4" stroke-width="2.4"/><path d="M27 1L26 11L19 6Z M3 29L4 19L11 24Z" fill="#c4c4c4"/><path d="M3 3L28 28" stroke="#1a1a1a" stroke-width="5"/><path d="M3 3L28 28" stroke="#c4c4c4" stroke-width="2.4"/></svg>
<svg style="left:2766px;top:1947px;" width="30" height="30" viewBox="0 0 30 30"><circle cx="15" cy="15" r="13.5" fill="none" stroke="#c4c4c4" stroke-width="2.2"/><path d="M9 15L13.5 19.5L21 11" fill="none" stroke="#c4c4c4" stroke-width="2.8"/></svg>
<div style="left:112px;top:76px;width:2695px;height:1906px;background:transparent;border-radius:20px;box-shadow:inset 0 0 0 2px #5a5a5a;"></div>
</div></body></html>
